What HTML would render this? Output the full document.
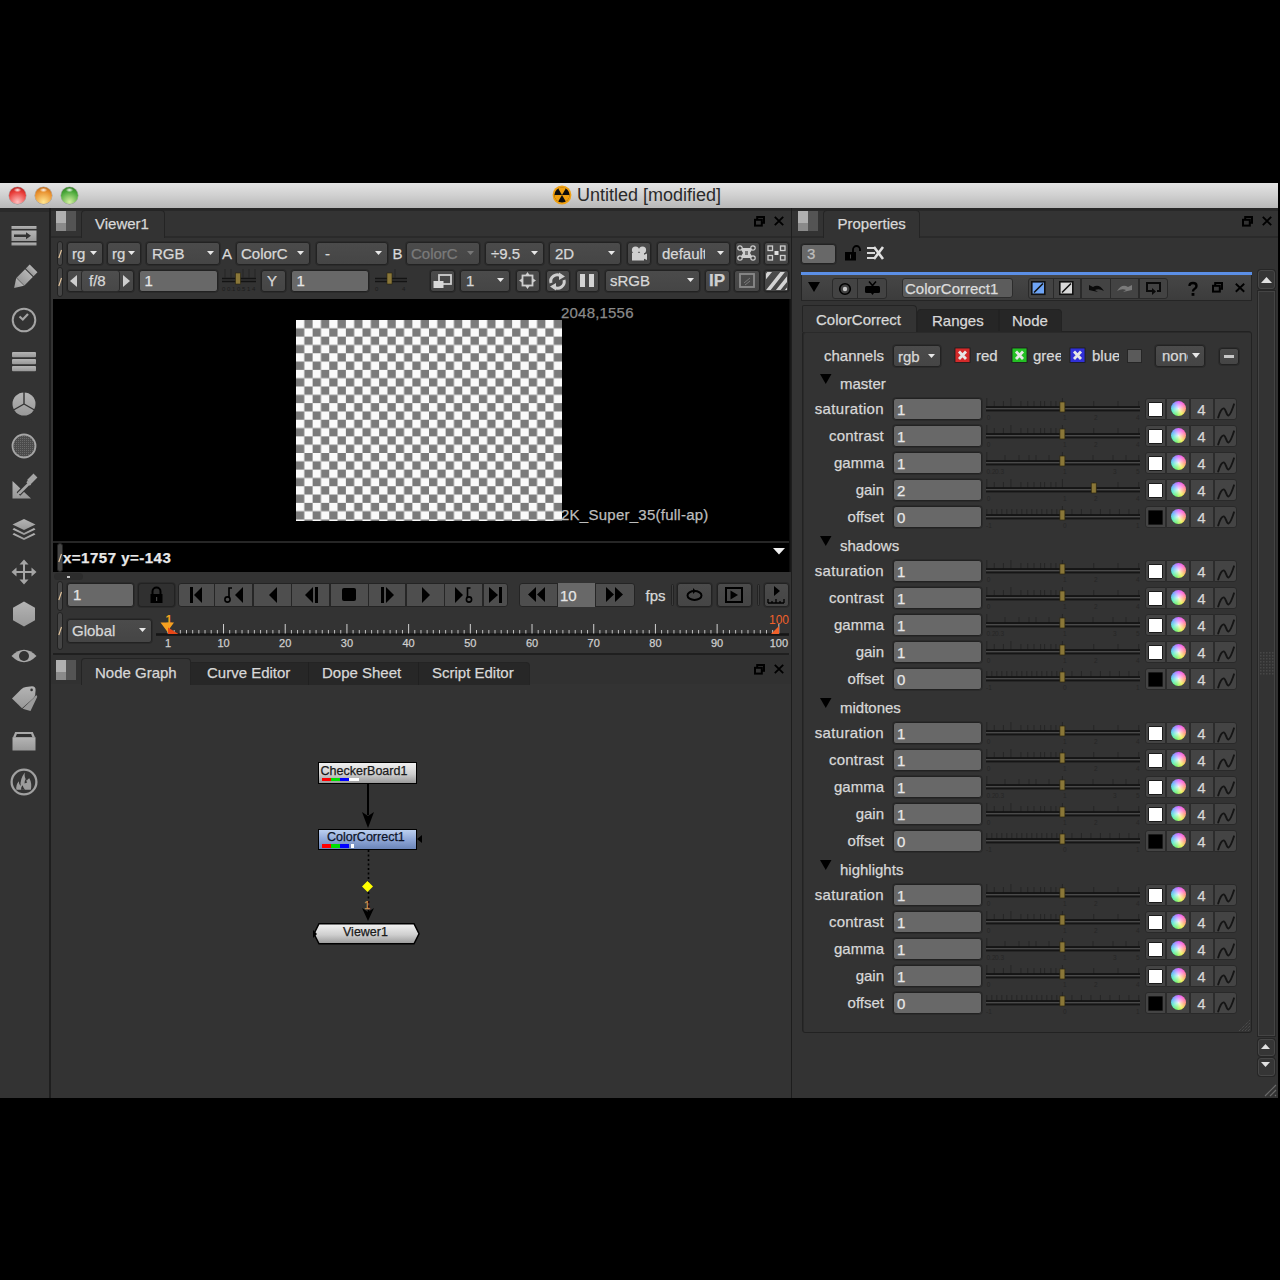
<!DOCTYPE html><html><head><meta charset="utf-8"><style>
html,body{margin:0;padding:0;background:#000;width:1280px;height:1280px;overflow:hidden;font-family:"Liberation Sans", sans-serif;}
div{position:absolute;box-sizing:border-box;}
.t{white-space:nowrap;line-height:1;-webkit-text-stroke:0.25px currentColor;}
.btn{background:linear-gradient(#4b4b4b,#454545);border:1px solid #222;border-radius:3px;box-shadow:0 0 0 0.8px #2a2a2a;}
.fld{background:#686868;border:1px solid #222;border-radius:3px;box-shadow:0 0 0 0.8px #2a2a2a;}
.hdl{background:#3d3d3d;border:1px solid #252525;border-radius:3px;}
svg{position:absolute;overflow:visible;}

</style></head><body>
<div id="root" style="left:0;top:0;width:1280px;height:1280px;background:#000;">
<div style="left:0px;top:183px;width:1280.00px;height:25.00px;background:linear-gradient(#e4e4e4,#d2d2d2 45%,#b8b8b8);"></div>
<div style="left:9.0px;top:186.5px;width:17px;height:17px;border-radius:50%;background:radial-gradient(circle at 50% 88%,#ffc0c0,#e83a36 62%,#9a2020 100%);box-shadow:0 0 0 0.5px rgba(0,0,0,.25);"></div>
<div style="left:14.0px;top:188px;width:7px;height:4px;border-radius:50%;background:radial-gradient(ellipse at 50% 50%,rgba(255,255,255,.95),rgba(255,255,255,0) 80%);"></div>
<div style="left:35.0px;top:186.5px;width:17px;height:17px;border-radius:50%;background:radial-gradient(circle at 50% 88%,#ffe690,#e8902e 62%,#a85a18 100%);box-shadow:0 0 0 0.5px rgba(0,0,0,.25);"></div>
<div style="left:40.0px;top:188px;width:7px;height:4px;border-radius:50%;background:radial-gradient(ellipse at 50% 50%,rgba(255,255,255,.95),rgba(255,255,255,0) 80%);"></div>
<div style="left:61.0px;top:186.5px;width:17px;height:17px;border-radius:50%;background:radial-gradient(circle at 50% 88%,#d4f0a0,#4aa83a 62%,#2c6a20 100%);box-shadow:0 0 0 0.5px rgba(0,0,0,.25);"></div>
<div style="left:66.0px;top:188px;width:7px;height:4px;border-radius:50%;background:radial-gradient(ellipse at 50% 50%,rgba(255,255,255,.95),rgba(255,255,255,0) 80%);"></div>
<svg style="left:552px;top:185px" width="20" height="20" viewBox="0 0 20 20"><circle cx="10" cy="10" r="9.4" fill="#f0a010"/><circle cx="10" cy="10" r="7.6" fill="#0d0d0d"/><path d="M10 10 L6.2 3.4 A7.6 7.6 0 0 1 13.8 3.4 Z" fill="#f0a010"/><path d="M10 10 L17.6 10 A7.6 7.6 0 0 1 13.8 16.6 Z" fill="#f0a010"/><path d="M10 10 L6.2 16.6 A7.6 7.6 0 0 1 2.4 10 Z" fill="#f0a010"/></svg>
<div class="t" style="left:577px;top:186.0px;font-size:18px;color:#2a2a2a;-webkit-text-stroke:0;">Untitled [modified]</div>
<div style="left:0px;top:208px;width:1280.00px;height:890.00px;background:#333;"></div>
<div style="left:0px;top:208px;width:49.00px;height:890.00px;background:#333;"></div>
<div style="left:0px;top:208px;width:49.00px;height:4.00px;background:#2a2a2a;"></div>
<div style="left:49.3px;top:208px;width:1.50px;height:890.00px;background:#1e1e1e;"></div>
<svg style="left:9.5px;top:222.0px" width="28" height="28" viewBox="0 0 28 28"><defs><linearGradient id="ig" x1="0" y1="0" x2="0" y2="1"><stop offset="0" stop-color="#b4b4b4"/><stop offset="1" stop-color="#989898"/></linearGradient></defs><rect x="1.5" y="4" width="25" height="3" fill="url(#ig)"/><rect x="1.5" y="8.5" width="25" height="10.5" fill="url(#ig)"/><rect x="1.5" y="20.5" width="25" height="3" fill="url(#ig)"/><path d="M4 12.6 H16 V10.3 L21 13.75 L16 17.2 V14.9 H4 Z" fill="#333"/></svg>
<svg style="left:9.5px;top:263.5px" width="28" height="28" viewBox="0 0 28 28"><g transform="rotate(45 14 14)"><rect x="8.5" y="0.5" width="11" height="5.5" fill="url(#ig)"/><rect x="8.5" y="7" width="11" height="12" fill="url(#ig)"/><path d="M8.5 19.5 L19.5 19.5 L14 28 Z" fill="url(#ig)"/></g></svg>
<svg style="left:9.5px;top:306.0px" width="28" height="28" viewBox="0 0 28 28"><circle cx="14" cy="14" r="11.3" fill="none" stroke="#a5a5a5" stroke-width="2"/><path d="M9.5 10.5 L12.8 13.5 L18 8" fill="none" stroke="#a5a5a5" stroke-width="2.2"/></svg>
<svg style="left:9.5px;top:348.0px" width="28" height="28" viewBox="0 0 28 28"><rect x="2" y="4" width="24" height="5.2" rx="1" fill="url(#ig)"/><rect x="2" y="11" width="24" height="5.2" rx="1" fill="url(#ig)"/><rect x="2" y="18" width="24" height="5.2" rx="1" fill="url(#ig)"/></svg>
<svg style="left:9.5px;top:390.0px" width="28" height="28" viewBox="0 0 28 28"><circle cx="14" cy="14" r="11.5" fill="url(#ig)"/><path d="M14 14 V2 M14 14 L24.5 20 M14 14 L3.5 20" stroke="#333" stroke-width="1.4"/></svg>
<svg style="left:9.5px;top:432.0px" width="28" height="28" viewBox="0 0 28 28"><defs><pattern id="dp" width="2" height="2" patternUnits="userSpaceOnUse"><rect width="2" height="2" fill="#4c4c4c"/><rect width="1" height="1" fill="#6a6a6a"/></pattern></defs><circle cx="14" cy="14" r="11.5" fill="url(#dp)" stroke="#a5a5a5" stroke-width="1.8"/></svg>
<svg style="left:9.5px;top:474.0px" width="28" height="28" viewBox="0 0 28 28"><path d="M2.5 7 V24.5 H21 Z" fill="url(#ig)"/><path d="M8.5 20 L20 8" stroke="#333" stroke-width="5"/><path d="M9 19.5 L20 8.5" stroke="#a5a5a5" stroke-width="2.6"/><path d="M7.5 21.5 L9.5 18" stroke="#a5a5a5" stroke-width="1.5"/><path d="M17 7.5 L20.5 11 M18.5 6 L23.5 1 L26 3.5 L21 8.5 Z" stroke="#a5a5a5" stroke-width="2" fill="#a5a5a5"/></svg>
<svg style="left:9.5px;top:516.0px" width="28" height="28" viewBox="0 0 28 28"><path d="M14 3 L25.5 8.5 L14 14 L2.5 8.5 Z" fill="url(#ig)"/><path d="M4 12 L14 17 L24 12 L25.5 13.5 L14 19 L2.5 13.5 Z" fill="url(#ig)"/><path d="M4 17 L14 22 L24 17 L25.5 18.5 L14 24 L2.5 18.5 Z" fill="url(#ig)"/></svg>
<svg style="left:9.5px;top:558.0px" width="28" height="28" viewBox="0 0 28 28"><path d="M14 3 V25 M3 14 H25" stroke="#a5a5a5" stroke-width="2"/><path d="M14 1.5 L18.5 6.5 H9.5 Z M14 26.5 L18.5 21.5 H9.5 Z M1.5 14 L6.5 9.5 V18.5 Z M26.5 14 L21.5 9.5 V18.5 Z" fill="#a5a5a5"/></svg>
<svg style="left:9.5px;top:600.0px" width="28" height="28" viewBox="0 0 28 28"><path d="M14 1.5 L25 7.8 V20.2 L14 26.5 L3 20.2 V7.8 Z" fill="url(#ig)"/></svg>
<svg style="left:9.5px;top:642.0px" width="28" height="28" viewBox="0 0 28 28"><path d="M1.5 14 Q14 1.5 26.5 14 Q14 26.5 1.5 14 Z" fill="#a8a8a8"/><circle cx="14" cy="14" r="5" fill="#333"/></svg>
<svg style="left:9.5px;top:684.0px" width="28" height="28" viewBox="0 0 28 28"><path d="M12.5 24.8 L23.5 14.2 Q25 12.5 26.3 11 L27.3 12.8 L20.5 27 Z" fill="#9a9a9a"/><path d="M2 14.5 L11 5.5 Q13 3.6 16 3.1 L22 2.3 Q25.6 2.3 25.6 6 L25.2 10.8 Q24.8 13 23 14.6 L12 24.2 Z" fill="url(#ig)"/><circle cx="21.6" cy="5.9" r="1.3" fill="#333"/></svg>
<svg style="left:9.5px;top:729.0px" width="28" height="24" viewBox="0 0 28 24"><path d="M3 8.2 L5.2 3 H22.8 L25 8.2 Z" fill="#a8a8a8"/><path d="M5.6 8.2 L6.9 5 H21.1 L22.4 8.2 Z" fill="#2e2e2e"/><rect x="2.5" y="8.2" width="23" height="13.3" fill="url(#ig)"/></svg>
<svg style="left:9.5px;top:768.3px" width="28" height="28" viewBox="0 0 28 28"><circle cx="14" cy="14" r="12.4" fill="none" stroke="#a0a0a0" stroke-width="2.3"/><path d="M6.5 21.8 Q5.5 17 8.8 13.2 Q8.8 16.8 10.8 18 Q9.6 11.5 14.8 4.6 Q14 9.8 16.8 12.8 Q17.6 10.8 19.3 10.2 Q22.2 15 20.8 21.8 Z" fill="#9c9c9c"/><path d="M11 21.8 Q10.6 19 12.6 17.2 Q13.2 19.6 15.2 21.8 Z M14.5 15.5 Q14.6 12.5 16 10.5 Q16 13 17.2 14.5 Z" fill="#333"/></svg>
<div style="left:50.8px;top:208px;width:740.00px;height:29.00px;background:#333;"></div>
<div style="left:50.8px;top:208px;width:740.00px;height:3.00px;background:#282828;"></div>
<div style="left:50.8px;top:236px;width:740.00px;height:2.00px;background:#2a2a2a;"></div>
<div style="left:56px;top:211px;width:10.00px;height:12.00px;background:#b0b0b0;"></div><div style="left:56px;top:223px;width:10.00px;height:8.00px;background:#8a8a8a;"></div><div style="left:66px;top:211px;width:10.00px;height:20.00px;background:#545454;"></div>
<div style="left:81px;top:210px;width:84.00px;height:28.00px;background:#333;border:1px solid #242424;border-bottom:none;border-radius:4px 4px 0 0;"></div>
<div class="t" style="left:95px;top:215.6px;font-size:15px;color:#d8d8d8;">Viewer1</div>
<svg style="left:753.5px;top:215.5px" width="11" height="11" viewBox="0 0 11 11"><rect x="3.2" y="1" width="6.8" height="5.8" fill="none" stroke="#000" stroke-width="2"/><rect x="1" y="3.8" width="6.8" height="5.8" fill="#333" stroke="#000" stroke-width="2"/></svg><svg style="left:773.5px;top:215.5px" width="10" height="10" viewBox="0 0 10 10"><path d="M0.8 0.8 L9.2 9.2 M9.2 0.8 L0.8 9.2" stroke="#000" stroke-width="1.9"/></svg>
<div style="left:50.8px;top:238px;width:740.00px;height:61.00px;background:#333;"></div>
<div style="left:56.5px;top:241px;width:6.00px;height:25.00px;background:#454545;border:1px solid #222;border-radius:3px;"></div><svg style="left:57.5px;top:248.5px" width="4" height="10" viewBox="0 0 4 10"><path d="M3.5 1 L0.8 9" stroke="#e8c9a0" stroke-width="1.1"/></svg>
<div style="left:56.5px;top:267px;width:6.00px;height:30.00px;background:#454545;border:1px solid #222;border-radius:3px;"></div><svg style="left:57.5px;top:277.0px" width="4" height="10" viewBox="0 0 4 10"><path d="M3.5 1 L0.8 9" stroke="#e8c9a0" stroke-width="1.1"/></svg>
<div class="btn" style="left:67px;top:242px;width:35.50px;height:22.50px;"></div><div class="t" style="left:72px;top:245.8px;font-size:15px;color:#d8d8d8;">rg</div><svg style="left:89.5px;top:250.75px" width="7" height="4" viewBox="0 0 7 4"><path d="M0 0 L7 0 L3.5 4 Z" fill="#e8e8e8"/></svg>
<div class="btn" style="left:107px;top:242px;width:33.50px;height:22.50px;"></div><div class="t" style="left:112px;top:245.8px;font-size:15px;color:#d8d8d8;">rg</div><svg style="left:127.5px;top:250.75px" width="7" height="4" viewBox="0 0 7 4"><path d="M0 0 L7 0 L3.5 4 Z" fill="#e8e8e8"/></svg>
<div class="btn" style="left:146px;top:242px;width:73.50px;height:22.50px;"></div><div class="t" style="left:152px;top:245.8px;font-size:15px;color:#d8d8d8;">RGB</div><svg style="left:206.5px;top:250.75px" width="7" height="4" viewBox="0 0 7 4"><path d="M0 0 L7 0 L3.5 4 Z" fill="#e8e8e8"/></svg>
<div class="t" style="left:222px;top:245.6px;font-size:15px;color:#d8d8d8;">A</div>
<div class="btn" style="left:236px;top:242px;width:74.00px;height:22.50px;"></div><div class="t" style="left:241px;top:245.8px;font-size:15px;color:#d8d8d8;">ColorC</div><svg style="left:297.0px;top:250.75px" width="7" height="4" viewBox="0 0 7 4"><path d="M0 0 L7 0 L3.5 4 Z" fill="#e8e8e8"/></svg>
<div class="btn" style="left:315.5px;top:242px;width:72.50px;height:22.50px;"></div><div class="t" style="left:325px;top:245.8px;font-size:15px;color:#d8d8d8;">-</div><svg style="left:375.0px;top:250.75px" width="7" height="4" viewBox="0 0 7 4"><path d="M0 0 L7 0 L3.5 4 Z" fill="#e8e8e8"/></svg>
<div class="t" style="left:392.5px;top:245.6px;font-size:15px;color:#d8d8d8;">B</div>
<div class="btn" style="left:405.5px;top:242px;width:74.00px;height:22.50px;"></div><div class="t" style="left:411px;top:245.8px;font-size:15px;color:#7a7a7a;">ColorC</div><svg style="left:466.5px;top:250.75px" width="7" height="4" viewBox="0 0 7 4"><path d="M0 0 L7 0 L3.5 4 Z" fill="#777"/></svg>
<div class="btn" style="left:485px;top:242px;width:58.50px;height:22.50px;"></div><div class="t" style="left:491px;top:245.8px;font-size:15px;color:#d8d8d8;">&#247;9.5</div><svg style="left:530.5px;top:250.75px" width="7" height="4" viewBox="0 0 7 4"><path d="M0 0 L7 0 L3.5 4 Z" fill="#e8e8e8"/></svg>
<div class="btn" style="left:548.5px;top:242px;width:72.50px;height:22.50px;"></div><div class="t" style="left:555px;top:245.8px;font-size:15px;color:#d8d8d8;">2D</div><svg style="left:608.0px;top:250.75px" width="7" height="4" viewBox="0 0 7 4"><path d="M0 0 L7 0 L3.5 4 Z" fill="#e8e8e8"/></svg>
<div class="btn" style="left:627px;top:242px;width:23.50px;height:22.50px;"></div><svg style="left:631px;top:246px" width="16" height="15" viewBox="0 0 16 15"><circle cx="4.5" cy="4" r="3.6" fill="#d0d0d0"/><circle cx="11.5" cy="4" r="3.6" fill="#d0d0d0"/><rect x="1" y="7" width="12" height="7.5" fill="#d0d0d0"/><path d="M12.5 9 L16 7.5 V14 L12.5 12.5 Z" fill="#d0d0d0"/></svg>
<div class="btn" style="left:657px;top:242px;width:73.00px;height:22.50px;"></div><div class="t" style="left:662px;top:245.8px;font-size:15px;color:#d8d8d8;"></div><svg style="left:717.0px;top:250.75px" width="7" height="4" viewBox="0 0 7 4"><path d="M0 0 L7 0 L3.5 4 Z" fill="#e8e8e8"/></svg>
<div style="left:662px;top:242px;width:43px;height:24px;overflow:hidden;"><div class="t" style="left:0px;top:3.6px;font-size:15px;color:#d8d8d8;">default</div></div>
<div class="btn" style="left:734.5px;top:242px;width:25.00px;height:22.50px;"></div><svg style="left:737px;top:245px" width="19" height="16" viewBox="0 0 19 16"><path d="M3 3 L16 3 L13 8 L16 13 L3 13 L6 8 Z" fill="#cfcfcf"/><circle cx="3" cy="3" r="2.2" fill="#444" stroke="#cfcfcf" stroke-width="1.2"/><circle cx="16" cy="3" r="2.2" fill="#444" stroke="#cfcfcf" stroke-width="1.2"/><circle cx="3" cy="13" r="2.2" fill="#444" stroke="#cfcfcf" stroke-width="1.2"/><circle cx="16" cy="13" r="2.2" fill="#444" stroke="#cfcfcf" stroke-width="1.2"/><rect x="8" y="6" width="3" height="4" fill="#777"/></svg>
<div class="btn" style="left:764px;top:242px;width:25.00px;height:22.50px;"></div><svg style="left:767px;top:245px" width="19" height="16" viewBox="0 0 19 16"><g fill="none" stroke="#cfcfcf" stroke-width="1.3"><rect x="1" y="1" width="4.5" height="4.5"/><rect x="13.5" y="1" width="4.5" height="4.5"/><rect x="1" y="10.5" width="4.5" height="4.5"/><rect x="13.5" y="10.5" width="4.5" height="4.5"/></g><rect x="7.5" y="6" width="4" height="4" fill="#e0e0e0"/></svg>
<div class="btn" style="left:67px;top:269.5px;width:66.50px;height:22.00px;"></div>
<div style="left:81px;top:269.5px;width:38.50px;height:22.00px;background:linear-gradient(#4e4e4e,#474747);border:1px solid #2a2a2a;border-radius:3px;"></div>
<svg style="left:70px;top:274.5px" width="7" height="12" viewBox="0 0 7 12"><path d="M7 0 V12 L0 6 Z" fill="#cfcfcf"/></svg>
<svg style="left:123px;top:274.5px" width="7" height="12" viewBox="0 0 7 12"><path d="M0 0 V12 L7 6 Z" fill="#cfcfcf"/></svg>
<div class="t" style="left:89px;top:273.1px;font-size:15px;color:#d8d8d8;">f/8</div>
<div class="fld" style="left:138.5px;top:269.5px;width:79.50px;height:22.00px;"></div><div class="t" style="left:144.5px;top:273.1px;font-size:15px;color:#e6e6e6;">1</div>
<svg style="left:222px;top:265px" width="34" height="24" viewBox="0 0 34 24"><path d="M0 13.5 H34 M0 16.5 H34" stroke="#141414" stroke-width="1.4"/><path d="M3 4 V13 M9 4 V13 M21 4 V13 M27 4 V13 M33 4 V13" stroke="#262626"/><rect x="13.5" y="8" width="5" height="11" fill="#8a7739" stroke="#2b250f" stroke-width="0.6"/><text x="0" y="25.5" font-size="6" fill="#1c1c1c" font-family="Liberation Sans">0 0.1 0.5 1 4</text></svg>
<div class="btn" style="left:260.5px;top:269.5px;width:25.50px;height:22.00px;"></div><div class="t" style="left:267px;top:273.1px;font-size:15px;color:#d8d8d8;">Y</div>
<div class="fld" style="left:290.5px;top:269.5px;width:78.50px;height:22.00px;"></div><div class="t" style="left:296.5px;top:273.1px;font-size:15px;color:#e6e6e6;">1</div>
<svg style="left:375px;top:265px" width="32" height="24" viewBox="0 0 32 24"><path d="M0 13.5 H32 M0 16.5 H32" stroke="#141414" stroke-width="1.4"/><path d="M20 4 V13" stroke="#262626"/><rect x="12" y="8" width="5" height="11" fill="#8a7739" stroke="#2b250f" stroke-width="0.6"/><text x="0" y="25.5" font-size="6" fill="#1c1c1c" font-family="Liberation Sans">0</text><text x="27" y="25.5" font-size="6" fill="#1c1c1c" font-family="Liberation Sans">4</text></svg>
<div class="btn" style="left:430px;top:269.5px;width:25.00px;height:22.00px;"></div><svg style="left:433px;top:273.5px" width="20" height="14" viewBox="0 0 20 14"><rect x="6" y="1" width="12" height="9" fill="none" stroke="#cfcfcf" stroke-width="1.8"/><rect x="0.5" y="7" width="10" height="7" fill="#d8d8d8"/></svg>
<div class="btn" style="left:460px;top:269.5px;width:50.00px;height:22.00px;"></div><div class="t" style="left:466px;top:273.1px;font-size:15px;color:#d8d8d8;">1</div><svg style="left:497.0px;top:278.0px" width="7" height="4" viewBox="0 0 7 4"><path d="M0 0 L7 0 L3.5 4 Z" fill="#e8e8e8"/></svg>
<div class="btn" style="left:515.5px;top:269.5px;width:24.00px;height:22.00px;"></div><svg style="left:519px;top:271.5px" width="17" height="17" viewBox="0 0 17 17"><rect x="3.5" y="3.5" width="10" height="10" fill="none" stroke="#cfcfcf" stroke-width="1.8"/><path d="M8.5 0 L10.5 3 H6.5 Z M8.5 17 L10.5 14 H6.5 Z M0 8.5 L3 6.5 V10.5 Z M17 8.5 L14 6.5 V10.5 Z" fill="#cfcfcf"/></svg>
<div class="btn" style="left:545.5px;top:269.5px;width:24.00px;height:22.00px;"></div><svg style="left:548px;top:271.5px" width="19" height="19" viewBox="0 0 19 19"><path d="M3 11 A6.5 6.5 0 0 1 13 4" fill="none" stroke="#cfcfcf" stroke-width="3"/><path d="M11 0.5 L17 4.5 L11 8 Z" fill="#cfcfcf"/><path d="M16 8 A6.5 6.5 0 0 1 6 15" fill="none" stroke="#cfcfcf" stroke-width="3"/><path d="M8 18.5 L2 14.5 L8 11 Z" fill="#cfcfcf"/></svg>
<div class="btn" style="left:575.5px;top:269.5px;width:23.50px;height:22.00px;"></div><div style="left:580px;top:274.0px;width:4.50px;height:12.50px;background:#d4d4d4;"></div><div style="left:589px;top:274.0px;width:4.50px;height:12.50px;background:#d4d4d4;"></div>
<div class="btn" style="left:605px;top:269.5px;width:95.00px;height:22.00px;"></div><div class="t" style="left:610px;top:273.1px;font-size:15px;color:#d8d8d8;">sRGB</div><svg style="left:687.0px;top:278.0px" width="7" height="4" viewBox="0 0 7 4"><path d="M0 0 L7 0 L3.5 4 Z" fill="#e8e8e8"/></svg>
<div class="btn" style="left:704.5px;top:269.5px;width:25.00px;height:22.00px;"></div><div class="t" style="left:709px;top:272.4px;font-size:17px;color:#d0d0d0;font-weight:bold;">IP</div>
<div class="btn" style="left:734px;top:269.5px;width:25.50px;height:22.00px;"></div><svg style="left:738.5px;top:272.5px" width="16" height="15" viewBox="0 0 16 15"><rect x="1" y="1" width="14" height="13" fill="none" stroke="#8a8a8a" stroke-width="1.8"/><path d="M5 10 L11 5 M6 12 L11 8" stroke="#7a7a7a" stroke-width="1"/></svg>
<div class="btn" style="left:764px;top:269.5px;width:25.00px;height:22.00px;"></div><svg style="left:765px;top:270.5px" width="23" height="20" viewBox="0 0 23 20"><clipPath id="cps"><rect x="1" y="1" width="21" height="18"/></clipPath><g clip-path="url(#cps)" stroke="#d4d4d4" stroke-width="3.6"><path d="M-6 14 L8 -3 M1 22 L20 -2 M10 23 L27 2 M18 24 L30 10"/></g></svg>
<div style="left:53px;top:299px;width:736.00px;height:241.50px;background:#000;"></div>
<div style="left:53px;top:540.5px;width:736.00px;height:2.50px;background:#262626;"></div>
<div style="left:788.5px;top:299px;width:2.50px;height:273.00px;background:linear-gradient(90deg,#080808,#1c1c1c);"></div>
<svg style="left:296px;top:319.5px" width="266" height="201" viewBox="0 0 266 201"><defs><pattern id="ckp" width="16.6250" height="16.6250" patternUnits="userSpaceOnUse"><rect width="16.6250" height="16.6250" fill="#fafafa"/><rect x="8.3125" y="0" width="8.3125" height="8.3125" fill="#7b7b7b"/><rect x="0" y="8.3125" width="8.3125" height="8.3125" fill="#7b7b7b"/></pattern></defs><rect width="266" height="201" fill="url(#ckp)"/></svg>
<div class="t" style="left:561px;top:305.1px;font-size:15px;color:#8a8a8a;letter-spacing:0.2px;">2048,1556</div>
<div class="t" style="left:561px;top:506.6px;font-size:15px;color:#bdbdbd;letter-spacing:0.25px;">2K_Super_35(full-ap)</div>
<div style="left:53px;top:543px;width:736.00px;height:29.00px;background:#000;"></div>
<div style="left:56.5px;top:543px;width:6.00px;height:29.00px;background:#454545;border:1px solid #222;border-radius:3px;"></div><svg style="left:57.5px;top:552.5px" width="4" height="10" viewBox="0 0 4 10"><path d="M3.5 1 L0.8 9" stroke="#e8c9a0" stroke-width="1.1"/></svg>
<div class="t" style="left:63px;top:549.6px;font-size:15px;color:#e8e8e8;font-weight:bold;letter-spacing:0.5px;">x=1757 y=-143</div>
<svg style="left:773.0px;top:548.4000000000001px" width="12" height="6.6" viewBox="0 0 12 6.6"><path d="M0 0 L12 0 L6.0 6.6 Z" fill="#f0f0f0"/></svg>
<div style="left:54px;top:573px;width:29.00px;height:7.00px;background:#2c2c2c;border-radius:4px;"></div>
<div style="left:67px;top:576px;width:3.00px;height:2.00px;background:#c8c8c8;"></div>
<div style="left:56.5px;top:581px;width:6.00px;height:30.00px;background:#454545;border:1px solid #222;border-radius:3px;"></div><svg style="left:57.5px;top:591.0px" width="4" height="10" viewBox="0 0 4 10"><path d="M3.5 1 L0.8 9" stroke="#e8c9a0" stroke-width="1.1"/></svg>
<div class="fld" style="left:67px;top:582.5px;width:67.00px;height:24.50px;"></div><div class="t" style="left:73px;top:587.4px;font-size:15px;color:#e6e6e6;">1</div>
<div style="left:138px;top:582.5px;width:36.50px;height:24.50px;background:#303030;border:1px solid #222;border-radius:3px;box-shadow:0 0 0 0.8px #2a2a2a;"></div>
<svg style="left:149px;top:586.5px" width="15" height="16" viewBox="0 0 15 16"><path d="M3.5 7 V4.5 A4 4 0 0 1 11.5 4.5 V7" fill="none" stroke="#000" stroke-width="2"/><rect x="1.5" y="7" width="12" height="9" fill="#000"/><rect x="7" y="10" width="1.2" height="4" fill="#444"/></svg>
<div style="left:178px;top:582.5px;width:330.00px;height:24.50px;background:#4e4e4e;border:1px solid #242424;border-radius:3px;"></div>
<div style="left:213.7px;top:582.5px;width:1.60px;height:24.50px;background:#262626;"></div>
<div style="left:252.2px;top:582.5px;width:1.60px;height:24.50px;background:#262626;"></div>
<div style="left:290.7px;top:582.5px;width:1.60px;height:24.50px;background:#262626;"></div>
<div style="left:329.2px;top:582.5px;width:1.60px;height:24.50px;background:#262626;"></div>
<div style="left:367.7px;top:582.5px;width:1.60px;height:24.50px;background:#262626;"></div>
<div style="left:405.2px;top:582.5px;width:1.60px;height:24.50px;background:#262626;"></div>
<div style="left:443.7px;top:582.5px;width:1.60px;height:24.50px;background:#262626;"></div>
<div style="left:482.2px;top:582.5px;width:1.60px;height:24.50px;background:#262626;"></div>
<svg style="left:190.25px;top:587.0px" width="12" height="16" viewBox="0 0 12 16"><rect x="0" y="0" width="3" height="16" fill="#000"/><path d="M12 0 V16 L4 8 Z" fill="#000"/></svg>
<svg style="left:224.25px;top:587.0px" width="19" height="16" viewBox="0 0 19 16"><circle cx="3.5" cy="12.5" r="2.6" fill="none" stroke="#000" stroke-width="1.6"/><path d="M5 10 V1 H8" stroke="#000" stroke-width="1.6" fill="none"/><path d="M19 0 V16 L11 8 Z" fill="#000"/></svg>
<svg style="left:267.25px;top:587.0px" width="10" height="16" viewBox="0 0 10 16"><path d="M10 0 V16 L2 8 Z" fill="#000"/></svg>
<svg style="left:303.75px;top:587.0px" width="14" height="16" viewBox="0 0 14 16"><path d="M9 0 V16 L1 8 Z" fill="#000"/><rect x="11" y="0" width="3" height="16" fill="#000"/></svg>
<svg style="left:342.25px;top:587.0px" width="14" height="16" viewBox="0 0 14 16"><rect x="0" y="1" width="14" height="13" rx="2" fill="#000"/></svg>
<svg style="left:380.75px;top:587.0px" width="13" height="16" viewBox="0 0 13 16"><rect x="0" y="0" width="3" height="16" fill="#000"/><path d="M5 0 V16 L13 8 Z" fill="#000"/></svg>
<svg style="left:420.25px;top:587.0px" width="10" height="16" viewBox="0 0 10 16"><path d="M2 0 V16 L10 8 Z" fill="#000"/></svg>
<svg style="left:454.75px;top:587.0px" width="18" height="16" viewBox="0 0 18 16"><path d="M0 0 V16 L8 8 Z" fill="#000"/><circle cx="14" cy="12.5" r="2.6" fill="none" stroke="#000" stroke-width="1.6"/><path d="M12.5 10 V1 H15.5" stroke="#000" stroke-width="1.6" fill="none"/></svg>
<svg style="left:489.0px;top:587.0px" width="13" height="16" viewBox="0 0 13 16"><path d="M0 0 V16 L9 8 Z" fill="#000"/><rect x="10" y="0" width="3" height="16" fill="#000"/></svg>
<div style="left:518.5px;top:582.5px;width:116.50px;height:24.50px;background:#4e4e4e;border:1px solid #242424;border-radius:3px;"></div>
<div style="left:556.5px;top:582.5px;width:39.50px;height:24.50px;background:#686868;border-left:1px solid #262626;border-right:1px solid #262626;"></div>
<svg style="left:527px;top:587.0px" width="19" height="15" viewBox="0 0 19 15"><path d="M9 0 V15 L1 7.5 Z M18 0 V15 L10 7.5 Z" fill="#000"/></svg>
<div class="t" style="left:560px;top:587.6px;font-size:15px;color:#e6e6e6;">10</div>
<svg style="left:606px;top:587.0px" width="19" height="15" viewBox="0 0 19 15"><path d="M0 0 V15 L8 7.5 Z M9 0 V15 L17 7.5 Z" fill="#000"/></svg>
<div class="t" style="left:645.5px;top:587.6px;font-size:15px;color:#d8d8d8;">fps</div>
<div style="left:671px;top:583.5px;width:2.50px;height:22.50px;background:#3d3d3d;border:1px solid #232323;border-radius:2px;"></div>
<div class="btn" style="left:677px;top:582.5px;width:35.00px;height:24.50px;"></div><svg style="left:686px;top:587.5px" width="17" height="13" viewBox="0 0 17 13"><ellipse cx="8.5" cy="7.5" rx="7" ry="4.5" fill="none" stroke="#000" stroke-width="2"/><path d="M7 0 L10 3 L7 6 Z" fill="#000"/></svg>
<div class="btn" style="left:716.5px;top:582.5px;width:35.50px;height:24.50px;"></div><svg style="left:725px;top:586.5px" width="18" height="16" viewBox="0 0 18 16"><rect x="1" y="1" width="16" height="14" fill="none" stroke="#000" stroke-width="2"/><path d="M5.5 3.5 V12.5 L13 8 Z" fill="#000"/></svg>
<div style="left:757px;top:583.5px;width:2.50px;height:22.50px;background:#3d3d3d;border:1px solid #232323;border-radius:2px;"></div>
<div class="btn" style="left:763.5px;top:582.5px;width:25.50px;height:24.50px;"></div><svg style="left:766px;top:585.5px" width="20" height="18" viewBox="0 0 20 18"><path d="M8 0 V10 L14 5 Z" fill="#000"/><path d="M2 17 H18 M2 17 V13 M6 17 V15 M10 17 V13 M14 17 V15 M18 17 V13" stroke="#000" stroke-width="1.3"/></svg>
<div style="left:56.5px;top:612px;width:6.00px;height:38.00px;background:#454545;border:1px solid #222;border-radius:3px;"></div><svg style="left:57.5px;top:626.0px" width="4" height="10" viewBox="0 0 4 10"><path d="M3.5 1 L0.8 9" stroke="#e8c9a0" stroke-width="1.1"/></svg>
<div class="btn" style="left:67px;top:618.5px;width:85.00px;height:24.00px;"></div><div class="t" style="left:72px;top:623.1px;font-size:15px;color:#d8d8d8;">Global</div><svg style="left:139.0px;top:628.0px" width="7" height="4" viewBox="0 0 7 4"><path d="M0 0 L7 0 L3.5 4 Z" fill="#e8e8e8"/></svg>
<svg style="left:156px;top:630px" width="629" height="10" viewBox="0 0 629 10"><path d="M0 4.5 H633" stroke="#151515" stroke-width="2.5"/><path d="M12.00 -6 V3.5" stroke="#d0d0d0" stroke-width="1"/><path d="M18.17 0 V3.5" stroke="#c0c0c0" stroke-width="1"/><path d="M24.34 0 V3.5" stroke="#c0c0c0" stroke-width="1"/><path d="M30.51 0 V3.5" stroke="#c0c0c0" stroke-width="1"/><path d="M36.68 0 V3.5" stroke="#c0c0c0" stroke-width="1"/><path d="M42.85 0 V3.5" stroke="#c0c0c0" stroke-width="1"/><path d="M49.02 0 V3.5" stroke="#c0c0c0" stroke-width="1"/><path d="M55.19 0 V3.5" stroke="#c0c0c0" stroke-width="1"/><path d="M61.36 0 V3.5" stroke="#c0c0c0" stroke-width="1"/><path d="M67.53 -6 V3.5" stroke="#d0d0d0" stroke-width="1"/><path d="M73.70 0 V3.5" stroke="#c0c0c0" stroke-width="1"/><path d="M79.87 0 V3.5" stroke="#c0c0c0" stroke-width="1"/><path d="M86.04 0 V3.5" stroke="#c0c0c0" stroke-width="1"/><path d="M92.21 0 V3.5" stroke="#c0c0c0" stroke-width="1"/><path d="M98.38 0 V3.5" stroke="#c0c0c0" stroke-width="1"/><path d="M104.55 0 V3.5" stroke="#c0c0c0" stroke-width="1"/><path d="M110.72 0 V3.5" stroke="#c0c0c0" stroke-width="1"/><path d="M116.89 0 V3.5" stroke="#c0c0c0" stroke-width="1"/><path d="M123.06 0 V3.5" stroke="#c0c0c0" stroke-width="1"/><path d="M129.23 -6 V3.5" stroke="#d0d0d0" stroke-width="1"/><path d="M135.40 0 V3.5" stroke="#c0c0c0" stroke-width="1"/><path d="M141.57 0 V3.5" stroke="#c0c0c0" stroke-width="1"/><path d="M147.74 0 V3.5" stroke="#c0c0c0" stroke-width="1"/><path d="M153.91 0 V3.5" stroke="#c0c0c0" stroke-width="1"/><path d="M160.08 0 V3.5" stroke="#c0c0c0" stroke-width="1"/><path d="M166.25 0 V3.5" stroke="#c0c0c0" stroke-width="1"/><path d="M172.42 0 V3.5" stroke="#c0c0c0" stroke-width="1"/><path d="M178.59 0 V3.5" stroke="#c0c0c0" stroke-width="1"/><path d="M184.76 0 V3.5" stroke="#c0c0c0" stroke-width="1"/><path d="M190.93 -6 V3.5" stroke="#d0d0d0" stroke-width="1"/><path d="M197.10 0 V3.5" stroke="#c0c0c0" stroke-width="1"/><path d="M203.27 0 V3.5" stroke="#c0c0c0" stroke-width="1"/><path d="M209.44 0 V3.5" stroke="#c0c0c0" stroke-width="1"/><path d="M215.61 0 V3.5" stroke="#c0c0c0" stroke-width="1"/><path d="M221.78 0 V3.5" stroke="#c0c0c0" stroke-width="1"/><path d="M227.95 0 V3.5" stroke="#c0c0c0" stroke-width="1"/><path d="M234.12 0 V3.5" stroke="#c0c0c0" stroke-width="1"/><path d="M240.29 0 V3.5" stroke="#c0c0c0" stroke-width="1"/><path d="M246.46 0 V3.5" stroke="#c0c0c0" stroke-width="1"/><path d="M252.63 -6 V3.5" stroke="#d0d0d0" stroke-width="1"/><path d="M258.80 0 V3.5" stroke="#c0c0c0" stroke-width="1"/><path d="M264.97 0 V3.5" stroke="#c0c0c0" stroke-width="1"/><path d="M271.14 0 V3.5" stroke="#c0c0c0" stroke-width="1"/><path d="M277.31 0 V3.5" stroke="#c0c0c0" stroke-width="1"/><path d="M283.48 0 V3.5" stroke="#c0c0c0" stroke-width="1"/><path d="M289.65 0 V3.5" stroke="#c0c0c0" stroke-width="1"/><path d="M295.82 0 V3.5" stroke="#c0c0c0" stroke-width="1"/><path d="M301.99 0 V3.5" stroke="#c0c0c0" stroke-width="1"/><path d="M308.16 0 V3.5" stroke="#c0c0c0" stroke-width="1"/><path d="M314.33 -6 V3.5" stroke="#d0d0d0" stroke-width="1"/><path d="M320.50 0 V3.5" stroke="#c0c0c0" stroke-width="1"/><path d="M326.67 0 V3.5" stroke="#c0c0c0" stroke-width="1"/><path d="M332.84 0 V3.5" stroke="#c0c0c0" stroke-width="1"/><path d="M339.01 0 V3.5" stroke="#c0c0c0" stroke-width="1"/><path d="M345.18 0 V3.5" stroke="#c0c0c0" stroke-width="1"/><path d="M351.35 0 V3.5" stroke="#c0c0c0" stroke-width="1"/><path d="M357.52 0 V3.5" stroke="#c0c0c0" stroke-width="1"/><path d="M363.69 0 V3.5" stroke="#c0c0c0" stroke-width="1"/><path d="M369.86 0 V3.5" stroke="#c0c0c0" stroke-width="1"/><path d="M376.03 -6 V3.5" stroke="#d0d0d0" stroke-width="1"/><path d="M382.20 0 V3.5" stroke="#c0c0c0" stroke-width="1"/><path d="M388.37 0 V3.5" stroke="#c0c0c0" stroke-width="1"/><path d="M394.54 0 V3.5" stroke="#c0c0c0" stroke-width="1"/><path d="M400.71 0 V3.5" stroke="#c0c0c0" stroke-width="1"/><path d="M406.88 0 V3.5" stroke="#c0c0c0" stroke-width="1"/><path d="M413.05 0 V3.5" stroke="#c0c0c0" stroke-width="1"/><path d="M419.22 0 V3.5" stroke="#c0c0c0" stroke-width="1"/><path d="M425.39 0 V3.5" stroke="#c0c0c0" stroke-width="1"/><path d="M431.56 0 V3.5" stroke="#c0c0c0" stroke-width="1"/><path d="M437.73 -6 V3.5" stroke="#d0d0d0" stroke-width="1"/><path d="M443.90 0 V3.5" stroke="#c0c0c0" stroke-width="1"/><path d="M450.07 0 V3.5" stroke="#c0c0c0" stroke-width="1"/><path d="M456.24 0 V3.5" stroke="#c0c0c0" stroke-width="1"/><path d="M462.41 0 V3.5" stroke="#c0c0c0" stroke-width="1"/><path d="M468.58 0 V3.5" stroke="#c0c0c0" stroke-width="1"/><path d="M474.75 0 V3.5" stroke="#c0c0c0" stroke-width="1"/><path d="M480.92 0 V3.5" stroke="#c0c0c0" stroke-width="1"/><path d="M487.09 0 V3.5" stroke="#c0c0c0" stroke-width="1"/><path d="M493.26 0 V3.5" stroke="#c0c0c0" stroke-width="1"/><path d="M499.43 -6 V3.5" stroke="#d0d0d0" stroke-width="1"/><path d="M505.60 0 V3.5" stroke="#c0c0c0" stroke-width="1"/><path d="M511.77 0 V3.5" stroke="#c0c0c0" stroke-width="1"/><path d="M517.94 0 V3.5" stroke="#c0c0c0" stroke-width="1"/><path d="M524.11 0 V3.5" stroke="#c0c0c0" stroke-width="1"/><path d="M530.28 0 V3.5" stroke="#c0c0c0" stroke-width="1"/><path d="M536.45 0 V3.5" stroke="#c0c0c0" stroke-width="1"/><path d="M542.62 0 V3.5" stroke="#c0c0c0" stroke-width="1"/><path d="M548.79 0 V3.5" stroke="#c0c0c0" stroke-width="1"/><path d="M554.96 0 V3.5" stroke="#c0c0c0" stroke-width="1"/><path d="M561.13 -6 V3.5" stroke="#d0d0d0" stroke-width="1"/><path d="M567.30 0 V3.5" stroke="#c0c0c0" stroke-width="1"/><path d="M573.47 0 V3.5" stroke="#c0c0c0" stroke-width="1"/><path d="M579.64 0 V3.5" stroke="#c0c0c0" stroke-width="1"/><path d="M585.81 0 V3.5" stroke="#c0c0c0" stroke-width="1"/><path d="M591.98 0 V3.5" stroke="#c0c0c0" stroke-width="1"/><path d="M598.15 0 V3.5" stroke="#c0c0c0" stroke-width="1"/><path d="M604.32 0 V3.5" stroke="#c0c0c0" stroke-width="1"/><path d="M610.49 0 V3.5" stroke="#c0c0c0" stroke-width="1"/><path d="M616.66 0 V3.5" stroke="#c0c0c0" stroke-width="1"/><path d="M622.83 -6 V3.5" stroke="#d0d0d0" stroke-width="1"/></svg>
<div class="t" style="left:-32.0px;width:400px;text-align:center;top:638.0px;font-size:11px;color:#cfcfcf;">1</div>
<div class="t" style="left:23.53px;width:400px;text-align:center;top:638.0px;font-size:11px;color:#cfcfcf;">10</div>
<div class="t" style="left:85.23000000000002px;width:400px;text-align:center;top:638.0px;font-size:11px;color:#cfcfcf;">20</div>
<div class="t" style="left:146.93px;width:400px;text-align:center;top:638.0px;font-size:11px;color:#cfcfcf;">30</div>
<div class="t" style="left:208.63px;width:400px;text-align:center;top:638.0px;font-size:11px;color:#cfcfcf;">40</div>
<div class="t" style="left:270.33px;width:400px;text-align:center;top:638.0px;font-size:11px;color:#cfcfcf;">50</div>
<div class="t" style="left:332.03px;width:400px;text-align:center;top:638.0px;font-size:11px;color:#cfcfcf;">60</div>
<div class="t" style="left:393.73px;width:400px;text-align:center;top:638.0px;font-size:11px;color:#cfcfcf;">70</div>
<div class="t" style="left:455.43000000000006px;width:400px;text-align:center;top:638.0px;font-size:11px;color:#cfcfcf;">80</div>
<div class="t" style="left:517.13px;width:400px;text-align:center;top:638.0px;font-size:11px;color:#cfcfcf;">90</div>
<div class="t" style="left:578.83px;width:400px;text-align:center;top:638.0px;font-size:11px;color:#cfcfcf;">100</div>
<svg style="left:160px;top:612px" width="20" height="24" viewBox="0 0 20 24"><text x="5.5" y="11.5" font-size="12" font-weight="bold" fill="#f0a020" font-family="Liberation Sans">1</text><path d="M0.5 10.5 H14 L10 16 L9 22 Z" fill="#f5a020"/><path d="M8 15.5 L18.5 22 H8 Z" fill="#e84818"/></svg>
<svg style="left:770px;top:614px" width="20" height="22" viewBox="0 0 20 22"><text x="-1" y="9.5" font-size="12" fill="#f0602a" font-family="Liberation Sans">100</text><path d="M9 12 V20 H1 Z" fill="#f0602a"/></svg>
<div style="left:53px;top:652.8px;width:736.00px;height:1.80px;background:#1f1f1f;"></div>
<div style="left:50.8px;top:654.6px;width:740.00px;height:29.90px;background:#313131;"></div>
<div style="left:56px;top:660px;width:10.00px;height:12.00px;background:#b0b0b0;"></div><div style="left:56px;top:672px;width:10.00px;height:8.00px;background:#8a8a8a;"></div><div style="left:66px;top:660px;width:10.00px;height:20.00px;background:#545454;"></div>
<div style="left:81px;top:658px;width:110.00px;height:27.00px;background:#333;border:1px solid #242424;border-bottom:none;border-radius:4px 4px 0 0;"></div>
<div class="t" style="left:95px;top:665.1px;font-size:15px;color:#d8d8d8;">Node Graph</div>
<div style="left:191px;top:662px;width:339.00px;height:22.50px;background:#272727;border-top:1px solid #242424;border-right:1px solid #242424;border-radius:0 4px 0 0;"></div>
<div style="left:307.5px;top:662px;width:1.50px;height:22.50px;background:#202020;"></div>
<div style="left:417.5px;top:662px;width:1.50px;height:22.50px;background:#202020;"></div>
<div class="t" style="left:207px;top:665.1px;font-size:15px;color:#d8d8d8;">Curve Editor</div>
<div class="t" style="left:322px;top:665.1px;font-size:15px;color:#d8d8d8;">Dope Sheet</div>
<div class="t" style="left:432px;top:665.1px;font-size:15px;color:#d8d8d8;">Script Editor</div>
<svg style="left:753.5px;top:663.5px" width="11" height="11" viewBox="0 0 11 11"><rect x="3.2" y="1" width="6.8" height="5.8" fill="none" stroke="#000" stroke-width="2"/><rect x="1" y="3.8" width="6.8" height="5.8" fill="#333" stroke="#000" stroke-width="2"/></svg><svg style="left:773.5px;top:663.5px" width="10" height="10" viewBox="0 0 10 10"><path d="M0.8 0.8 L9.2 9.2 M9.2 0.8 L0.8 9.2" stroke="#000" stroke-width="1.9"/></svg>
<div style="left:50.8px;top:684.5px;width:740.00px;height:413.50px;background:#333;"></div>
<div style="left:317.5px;top:761.5px;width:99.50px;height:22.00px;background:linear-gradient(#f0f0f0,#cfcfcf 55%,#9a9a9a);border:1.5px solid #000;"></div>
<div class="t" style="left:320.5px;top:764.8px;font-size:12.5px;color:#1a1a1a;">CheckerBoard1</div>
<div style="left:321.5px;top:777.5px;width:9.00px;height:3.50px;background:#ff0000;"></div><div style="left:330.5px;top:777.5px;width:9.00px;height:3.50px;background:#00e000;"></div><div style="left:339.5px;top:777.5px;width:9.00px;height:3.50px;background:#0000ff;"></div><div style="left:348.5px;top:777.5px;width:10.50px;height:3.50px;background:#fff;"></div>
<div style="left:366.8px;top:783.5px;width:2.00px;height:31.50px;background:#000;"></div>
<svg style="left:362px;top:812px" width="12" height="16" viewBox="0 0 12 16"><path d="M0 0 L6 4 L12 0 L6 16 Z" fill="#000"/></svg>
<div style="left:317.5px;top:828.5px;width:99.50px;height:21.50px;background:linear-gradient(#bcd0f0,#90a8d8 50%,#6b85b8);border:1.5px solid #000;"></div>
<div class="t" style="left:327px;top:831.2px;font-size:12.5px;color:#0d1428;">ColorCorrect1</div>
<div style="left:321.5px;top:844px;width:9.00px;height:3.50px;background:#ff0000;"></div><div style="left:330.5px;top:844px;width:9.00px;height:3.50px;background:#00e000;"></div><div style="left:339.5px;top:844px;width:9.00px;height:3.50px;background:#0000ff;"></div><div style="left:350.5px;top:844px;width:3.00px;height:3.50px;background:#fff;"></div>
<svg style="left:417px;top:835px" width="5" height="8" viewBox="0 0 5 8"><path d="M5 0 V8 L0 4 Z" fill="#000"/></svg>
<svg style="left:366.5px;top:850px" width="3" height="70" viewBox="0 0 3 70"><path d="M1.5 0 V32 M1.5 42 V62" stroke="#000" stroke-width="1.6" stroke-dasharray="2 2.5"/></svg>
<svg style="left:362px;top:881px" width="11" height="11" viewBox="0 0 11 11"><path d="M5.5 0 L11 5.5 L5.5 11 L0 5.5 Z" fill="#ffff00"/></svg>
<div class="t" style="left:167px;width:400px;text-align:center;top:900.0px;font-size:11px;color:#d09050;">1</div>
<svg style="left:362px;top:908px" width="12" height="13" viewBox="0 0 12 13"><path d="M0 0 L6 4 L12 0 L6 13 Z" fill="#000"/></svg>
<svg style="left:313px;top:923px" width="108" height="22" viewBox="0 0 108 22"><path d="M6 0.75 H101 L106 10.75 L101 20.75 H6 L1 10.75 Z" fill="url(#vg)" stroke="#000" stroke-width="1.5"/><defs><linearGradient id="vg" x1="0" y1="0" x2="0" y2="1"><stop offset="0" stop-color="#f4f4f4"/><stop offset="0.55" stop-color="#cfcfcf"/><stop offset="1" stop-color="#999"/></linearGradient></defs></svg>
<svg style="left:313px;top:929.5px" width="4" height="8" viewBox="0 0 4 8"><path d="M0 0 V8 L4 4 Z" fill="#000"/></svg>
<div class="t" style="left:343px;top:926.2px;font-size:12.5px;color:#1a1a1a;">Viewer1</div>
<div style="left:790.8px;top:208px;width:1.20px;height:890.00px;background:#1d1d1d;"></div>
<div style="left:792px;top:208px;width:486.00px;height:29.00px;background:#333;"></div>
<div style="left:792px;top:208px;width:486.00px;height:3.00px;background:#282828;"></div>
<div style="left:792px;top:236px;width:486.00px;height:2.00px;background:#2a2a2a;"></div>
<div style="left:797.5px;top:211px;width:10.00px;height:12.00px;background:#b0b0b0;"></div><div style="left:797.5px;top:223px;width:10.00px;height:8.00px;background:#8a8a8a;"></div><div style="left:807.5px;top:211px;width:10.00px;height:20.00px;background:#545454;"></div>
<div style="left:823px;top:210px;width:96.50px;height:28.00px;background:#333;border:1px solid #242424;border-bottom:none;border-radius:4px 4px 0 0;"></div>
<div class="t" style="left:837.5px;top:215.6px;font-size:15px;color:#d8d8d8;">Properties</div>
<svg style="left:1242px;top:215.5px" width="11" height="11" viewBox="0 0 11 11"><rect x="3.2" y="1" width="6.8" height="5.8" fill="none" stroke="#000" stroke-width="2"/><rect x="1" y="3.8" width="6.8" height="5.8" fill="#333" stroke="#000" stroke-width="2"/></svg><svg style="left:1262px;top:215.5px" width="10" height="10" viewBox="0 0 10 10"><path d="M0.8 0.8 L9.2 9.2 M9.2 0.8 L0.8 9.2" stroke="#000" stroke-width="1.9"/></svg>
<div style="left:792px;top:238px;width:486.00px;height:860.00px;background:#333;"></div>
<div style="left:1278px;top:183px;width:2.00px;height:915.00px;background:#000;"></div>
<div class="fld" style="left:801px;top:243.5px;width:35.00px;height:20.00px;"></div><div class="t" style="left:807px;top:246.1px;font-size:15px;color:#bdbdbd;">3</div>
<svg style="left:843.5px;top:245px" width="17" height="16" viewBox="0 0 17 16"><path d="M9 7 V4.5 A3.5 3.5 0 0 1 16 4.5 V6" fill="none" stroke="#000" stroke-width="1.8"/><rect x="1" y="7" width="11" height="8.5" fill="#000"/><rect x="6" y="9.5" width="1" height="4" fill="#444"/></svg>
<svg style="left:866px;top:246px" width="19" height="14" viewBox="0 0 19 14"><path d="M1 2 H9 M1 7 H9 M1 12 H9" stroke="#d8d8d8" stroke-width="2"/><path d="M8 1 L17 13 M17 1 L8 13" stroke="#e0e0e0" stroke-width="2.6"/></svg>
<div style="left:801px;top:271.5px;width:451.00px;height:3.50px;background:#5b8fe6;"></div>
<div style="left:801px;top:275px;width:451.00px;height:26.00px;background:linear-gradient(#464646,#3c3c3c);border:1px solid #252525;border-top:none;"></div>
<svg style="left:808px;top:282px" width="12" height="10" viewBox="0 0 12 10"><path d="M0 0 H12 L6 10 Z" fill="#000"/></svg>
<div style="left:832px;top:277.5px;width:55.00px;height:21.00px;background:#434343;border:1px solid #2a2a2a;border-radius:3px;"></div>
<div style="left:856.5px;top:277.5px;width:1.50px;height:21.00px;background:#2a2a2a;"></div>
<svg style="left:838px;top:281.5px" width="14" height="14" viewBox="0 0 14 14"><circle cx="7" cy="7" r="5.3" fill="none" stroke="#000" stroke-width="1.6"/><circle cx="7" cy="7" r="2.2" fill="#c8c8c8"/></svg>
<svg style="left:864px;top:281px" width="17" height="15" viewBox="0 0 17 15"><path d="M5 0.5 L8.5 4.5 L12 0.5" stroke="#000" stroke-width="1.5" fill="none"/><rect x="1" y="5" width="15" height="7" rx="1.5" fill="#000"/><path d="M7 12 H10 L8.5 14 Z" fill="#000"/></svg>
<div style="left:901.5px;top:278px;width:111.50px;height:20.00px;background:#5c5c5c;border:1px solid #2c2c2c;border-radius:3px;"></div>
<div class="t" style="left:905px;top:280.6px;font-size:15px;color:#dcdcdc;">ColorCorrect1</div>
<div style="left:1027.5px;top:277.5px;width:140.00px;height:21.00px;background:#434343;border:1px solid #2a2a2a;border-radius:3px;"></div>
<div style="left:1052.8px;top:277.5px;width:1.40px;height:21.00px;background:#2a2a2a;"></div>
<div style="left:1080.3px;top:277.5px;width:1.40px;height:21.00px;background:#2a2a2a;"></div>
<div style="left:1109.8px;top:277.5px;width:1.40px;height:21.00px;background:#2a2a2a;"></div>
<div style="left:1138.3px;top:277.5px;width:1.40px;height:21.00px;background:#2a2a2a;"></div>
<svg style="left:1031px;top:280.5px" width="15" height="14" viewBox="0 0 15 14"><rect x="0.8" y="0.8" width="13" height="12.5" fill="#6ea4f5" stroke="#111" stroke-width="1.6"/><path d="M3 11.5 L12 2.5" stroke="#111" stroke-width="1.6"/></svg>
<svg style="left:1059px;top:280.5px" width="15" height="14" viewBox="0 0 15 14"><rect x="0.8" y="0.8" width="13" height="12.5" fill="#d8d8d8" stroke="#111" stroke-width="1.6"/><path d="M3 11.5 L12 2.5" stroke="#111" stroke-width="1.6"/></svg>
<svg style="left:1087px;top:282px" width="18" height="12" viewBox="0 0 18 12"><path d="M2 8 V3 L6 5 Q12 1 17 9 Q12 6 8 8 L11 10 Z" fill="#0a0a0a"/></svg>
<svg style="left:1116px;top:282px" width="18" height="12" viewBox="0 0 18 12"><path d="M16 8 V3 L12 5 Q6 1 1 9 Q6 6 10 8 L7 10 Z" fill="#7a7a7a"/></svg>
<svg style="left:1145px;top:281px" width="17" height="15" viewBox="0 0 17 15"><path d="M8 10 H2 V2 H15 V10 H12" fill="none" stroke="#0a0a0a" stroke-width="2"/><path d="M7 7 V14 L11 10.5 Z" fill="#0a0a0a"/></svg>
<svg style="left:1187.5px;top:282px" width="10" height="14" viewBox="0 0 10 14"><path d="M1.5 4 Q1.5 1 5 1 Q8.5 1 8.5 4 Q8.5 6 6.5 7 Q5 7.8 5 9.5" fill="none" stroke="#000" stroke-width="2.4"/><rect x="3.6" y="11" width="2.8" height="2.8" fill="#000"/></svg>
<svg style="left:1211.5px;top:282px" width="11" height="11" viewBox="0 0 11 11"><rect x="3.2" y="1" width="6.8" height="5.8" fill="none" stroke="#000" stroke-width="2"/><rect x="1" y="3.8" width="6.8" height="5.8" fill="#3a3a3a" stroke="#000" stroke-width="2"/></svg><svg style="left:1234.5px;top:283px" width="10" height="9.5" viewBox="0 0 10 9.5"><path d="M0.8 0.8 L9.2 8.7 M9.2 0.8 L0.8 8.7" stroke="#000" stroke-width="1.9"/></svg>
<div style="left:1257.5px;top:270px;width:17.50px;height:19.00px;background:#353535;border:1px solid #474747;border-radius:3px;box-shadow:0 0 0 1px #262626;"></div>
<svg style="left:1260.75px;top:277.0px" width="11" height="6" viewBox="0 0 11 6"><path d="M0 6 L11 6 L5.5 0 Z" fill="#e0e0e0"/></svg>
<div style="left:1257.5px;top:291px;width:17.00px;height:744.50px;background:#333;border:1px solid #444;box-shadow:0 0 0 1px #262626;"></div>
<div style="left:1257.5px;top:1038.5px;width:17.50px;height:17.00px;background:#353535;border:1px solid #474747;border-radius:3px;box-shadow:0 0 0 1px #262626;"></div>
<svg style="left:1261.0px;top:1044.0px" width="9" height="5" viewBox="0 0 9 5"><path d="M0 5 L9 5 L4.5 0 Z" fill="#e0e0e0"/></svg>
<div style="left:1257.5px;top:1058px;width:17.50px;height:17.50px;background:#353535;border:1px solid #474747;border-radius:3px;box-shadow:0 0 0 1px #262626;"></div>
<svg style="left:1261.0px;top:1062.0px" width="9" height="5" viewBox="0 0 9 5"><path d="M0 0 L9 0 L4.5 5 Z" fill="#e0e0e0"/></svg>
<svg style="left:1264px;top:1084px" width="13" height="13" viewBox="0 0 13 13"><path d="M1 12 L12 1 M6 12 L12 6 M11 12 L12 11" stroke="#6a6a6a" stroke-width="1.2"/></svg>
<svg style="left:1260px;top:652px" width="14" height="24" viewBox="0 0 14 24"><defs><pattern id="grp" width="3" height="3" patternUnits="userSpaceOnUse"><rect width="1.5" height="1.5" fill="#474747"/></pattern></defs><rect width="14" height="24" fill="url(#grp)"/></svg>
<div style="left:801.5px;top:331px;width:450.00px;height:702.00px;background:#333;border:1px solid #222;border-radius:3px;box-shadow:inset 1px 1px 0 #2a2a2a;"></div>
<div style="left:916.5px;top:308.5px;width:145.50px;height:23.00px;background:#262626;border:1px solid #232323;border-bottom:none;border-radius:4px 4px 0 0;"></div>
<div style="left:998px;top:308.5px;width:1.50px;height:22.50px;background:#222;"></div>
<div style="left:801.5px;top:305px;width:115.50px;height:27.00px;background:#333;border:1px solid #232323;border-bottom:none;border-radius:2px 4px 0 0;"></div>
<div class="t" style="left:816px;top:312.1px;font-size:15px;color:#d8d8d8;">ColorCorrect</div>
<div class="t" style="left:932px;top:312.6px;font-size:15px;color:#d8d8d8;">Ranges</div>
<div class="t" style="left:1012px;top:312.6px;font-size:15px;color:#d8d8d8;">Node</div>
<svg style="left:1238px;top:1019px" width="13" height="13" viewBox="0 0 13 13"><path d="M1 12 L12 1 M4 12 L12 4 M7 12 L12 7 M10 12 L12 10" stroke="#555" stroke-width="1" stroke-dasharray="1 1"/></svg>
<div class="t" style="left:484px;width:400px;text-align:right;top:348.4px;font-size:15px;color:#d8d8d8;">channels</div>
<div class="btn" style="left:893px;top:345px;width:47.50px;height:22.00px;"></div><div class="t" style="left:898px;top:348.6px;font-size:15px;color:#d8d8d8;">rgb</div><svg style="left:927.5px;top:353.5px" width="7" height="4" viewBox="0 0 7 4"><path d="M0 0 L7 0 L3.5 4 Z" fill="#e8e8e8"/></svg>
<svg style="left:955px;top:348px" width="15" height="15" viewBox="0 0 15 15"><rect x="0" y="0" width="15" height="14.5" fill="#d42a2a" stroke="#1a1a1a" stroke-width="0.8"/><path d="M4 3.5 L11 11 M11 3.5 L4 11" stroke="#e6e6e6" stroke-width="2.8"/></svg>
<div class="t" style="left:976px;top:348.4px;font-size:15px;color:#d8d8d8;">red</div>
<svg style="left:1012px;top:348px" width="15" height="15" viewBox="0 0 15 15"><rect x="0" y="0" width="15" height="14.5" fill="#24c024" stroke="#1a1a1a" stroke-width="0.8"/><path d="M4 3.5 L11 11 M11 3.5 L4 11" stroke="#e6e6e6" stroke-width="2.8"/></svg>
<div style="left:1033px;top:340px;width:28px;height:28px;overflow:hidden;"><div class="t" style="left:0px;top:8.4px;font-size:15px;color:#d8d8d8;">green</div></div>
<svg style="left:1070px;top:348px" width="15" height="15" viewBox="0 0 15 15"><rect x="0" y="0" width="15" height="14.5" fill="#3030d8" stroke="#1a1a1a" stroke-width="0.8"/><path d="M4 3.5 L11 11 M11 3.5 L4 11" stroke="#e6e6e6" stroke-width="2.8"/></svg>
<div style="left:1092px;top:340px;width:27px;height:28px;overflow:hidden;"><div class="t" style="left:0px;top:8.4px;font-size:15px;color:#d8d8d8;">blue</div></div>
<div style="left:1127px;top:348.5px;width:14.50px;height:14.00px;background:#5a5a5a;border:1px solid #262626;"></div>
<div style="left:1155px;top:344.5px;width:50px;height:22px;" class="btn"></div>
<div style="left:1160px;top:340px;width:28px;height:28px;overflow:hidden;"><div class="t" style="left:2px;top:8.4px;font-size:15px;color:#d8d8d8;">none</div></div>
<svg style="left:1191.5px;top:353.0px" width="8" height="5" viewBox="0 0 8 5"><path d="M0 0 L8 0 L4.0 5 Z" fill="#e8e8e8"/></svg>
<div class="btn" style="left:1219px;top:347.5px;width:20.00px;height:17.00px;"></div><div style="left:1224px;top:354.5px;width:10.00px;height:3.00px;background:#c8c8c8;"></div>
<svg style="left:819.5px;top:374.4px" width="11.5" height="10" viewBox="0 0 11.5 10"><path d="M0 0 H11.5 L5.75 10 Z" fill="#000"/></svg>
<div class="t" style="left:840px;top:375.6px;font-size:15px;color:#d8d8d8;">master</div>
<div class="t" style="left:484px;width:400px;text-align:right;top:401.3px;font-size:15px;color:#d8d8d8;letter-spacing:0.35px;">saturation</div>
<div class="fld" style="left:892.5px;top:397.6px;width:89.50px;height:22.50px;"></div>
<div class="t" style="left:897px;top:401.7px;font-size:15px;color:#e8e8e8;">1</div>
<svg style="left:986px;top:397.6px" width="154" height="22" viewBox="0 0 154 22"><path d="M0.8 0 V9.5" stroke="#262626" stroke-width="1"/><path d="M8.3 3 V9.5" stroke="#262626" stroke-width="1"/><path d="M17.4 3 V9.5" stroke="#262626" stroke-width="1"/><path d="M24.9 0 V9.5" stroke="#262626" stroke-width="1"/><path d="M34.9 3 V9.5" stroke="#262626" stroke-width="1"/><path d="M41.75 3 V9.5" stroke="#262626" stroke-width="1"/><path d="M48 3 V9.5" stroke="#262626" stroke-width="1"/><path d="M54.6 3 V9.5" stroke="#262626" stroke-width="1"/><path d="M58.6 3 V9.5" stroke="#262626" stroke-width="1"/><path d="M64.9 3 V9.5" stroke="#262626" stroke-width="1"/><path d="M69.9 3 V9.5" stroke="#262626" stroke-width="1"/><path d="M76.4 0 V9.5" stroke="#262626" stroke-width="1"/><path d="M107.75 3 V9.5" stroke="#262626" stroke-width="1"/><path d="M132 3 V9.5" stroke="#262626" stroke-width="1"/><path d="M152.75 3 V9.5" stroke="#262626" stroke-width="1"/><rect x="0" y="8.1" width="154" height="1.9" fill="#151515"/><rect x="0" y="10" width="154" height="1.5" fill="#4a4a4a"/><rect x="0" y="11.5" width="154" height="1.9" fill="#151515"/><text x="0.8" y="21.5" font-size="6.5" fill="#262626" font-family="Liberation Sans">0</text><text x="77" y="21.5" font-size="6.5" fill="#262626" font-family="Liberation Sans">1</text><text x="108" y="21.5" font-size="6.5" fill="#262626" font-family="Liberation Sans">2</text><text x="150" y="21.5" font-size="6.5" fill="#262626" font-family="Liberation Sans">4</text><rect x="73.9" y="4" width="5" height="10" fill="#8a7738" stroke="#2c2610" stroke-width="0.7"/></svg>
<div style="left:1145px;top:397.6px;width:92.00px;height:22.50px;background:#444;border:1px solid #292929;border-radius:3px;"></div>
<div style="left:1165.45px;top:397.6px;width:1.60px;height:22.50px;background:#2c2c2c;"></div>
<div style="left:1189.2px;top:397.6px;width:1.60px;height:22.50px;background:#2c2c2c;"></div>
<div style="left:1212.95px;top:397.6px;width:1.60px;height:22.50px;background:#2c2c2c;"></div>
<div style="left:1147.5px;top:401.8px;width:15.50px;height:14.80px;background:#fff;border:1.5px solid #1a1a1a;border-radius:1px;"></div>
<div style="left:1171.0px;top:400.90000000000003px;width:15px;height:15px;border-radius:50%;background:radial-gradient(circle at 50% 50%,rgba(255,255,255,.85) 0,rgba(255,255,255,.25) 55%,rgba(255,255,255,0) 80%),conic-gradient(from 0deg,#d050ff,#ff50c0 50deg,#ff9060 100deg,#e8f040 150deg,#60f060 200deg,#40e8c0 250deg,#50a0ff 300deg,#d050ff);"></div>
<div class="t" style="left:1001.5px;width:400px;text-align:center;top:401.7px;font-size:15px;color:#d8d8d8;">4</div>
<svg style="left:1217px;top:400.6px" width="18" height="17" viewBox="0 0 18 17"><path d="M1.2 16.5 C3 10.5 5 6.8 7 7.5 C9 8.5 9.5 14.8 11.5 14.5 C13.5 14 15.5 8 17 3.3" fill="none" stroke="#151515" stroke-width="1.9" stroke-linecap="round"/></svg>
<div class="t" style="left:484px;width:400px;text-align:right;top:428.3px;font-size:15px;color:#d8d8d8;letter-spacing:0.2px;">contrast</div>
<div class="fld" style="left:892.5px;top:424.6px;width:89.50px;height:22.50px;"></div>
<div class="t" style="left:897px;top:428.7px;font-size:15px;color:#e8e8e8;">1</div>
<svg style="left:986px;top:424.6px" width="154" height="22" viewBox="0 0 154 22"><path d="M0.8 0 V9.5" stroke="#262626" stroke-width="1"/><path d="M8.3 3 V9.5" stroke="#262626" stroke-width="1"/><path d="M17.4 3 V9.5" stroke="#262626" stroke-width="1"/><path d="M24.9 0 V9.5" stroke="#262626" stroke-width="1"/><path d="M34.9 3 V9.5" stroke="#262626" stroke-width="1"/><path d="M41.75 3 V9.5" stroke="#262626" stroke-width="1"/><path d="M48 3 V9.5" stroke="#262626" stroke-width="1"/><path d="M54.6 3 V9.5" stroke="#262626" stroke-width="1"/><path d="M58.6 3 V9.5" stroke="#262626" stroke-width="1"/><path d="M64.9 3 V9.5" stroke="#262626" stroke-width="1"/><path d="M69.9 3 V9.5" stroke="#262626" stroke-width="1"/><path d="M76.4 0 V9.5" stroke="#262626" stroke-width="1"/><path d="M107.75 3 V9.5" stroke="#262626" stroke-width="1"/><path d="M132 3 V9.5" stroke="#262626" stroke-width="1"/><path d="M152.75 3 V9.5" stroke="#262626" stroke-width="1"/><rect x="0" y="8.1" width="154" height="1.9" fill="#151515"/><rect x="0" y="10" width="154" height="1.5" fill="#4a4a4a"/><rect x="0" y="11.5" width="154" height="1.9" fill="#151515"/><text x="0.8" y="21.5" font-size="6.5" fill="#262626" font-family="Liberation Sans">0</text><text x="77" y="21.5" font-size="6.5" fill="#262626" font-family="Liberation Sans">1</text><text x="108" y="21.5" font-size="6.5" fill="#262626" font-family="Liberation Sans">2</text><text x="150" y="21.5" font-size="6.5" fill="#262626" font-family="Liberation Sans">4</text><rect x="73.9" y="4" width="5" height="10" fill="#8a7738" stroke="#2c2610" stroke-width="0.7"/></svg>
<div style="left:1145px;top:424.6px;width:92.00px;height:22.50px;background:#444;border:1px solid #292929;border-radius:3px;"></div>
<div style="left:1165.45px;top:424.6px;width:1.60px;height:22.50px;background:#2c2c2c;"></div>
<div style="left:1189.2px;top:424.6px;width:1.60px;height:22.50px;background:#2c2c2c;"></div>
<div style="left:1212.95px;top:424.6px;width:1.60px;height:22.50px;background:#2c2c2c;"></div>
<div style="left:1147.5px;top:428.8px;width:15.50px;height:14.80px;background:#fff;border:1.5px solid #1a1a1a;border-radius:1px;"></div>
<div style="left:1171.0px;top:427.90000000000003px;width:15px;height:15px;border-radius:50%;background:radial-gradient(circle at 50% 50%,rgba(255,255,255,.85) 0,rgba(255,255,255,.25) 55%,rgba(255,255,255,0) 80%),conic-gradient(from 0deg,#d050ff,#ff50c0 50deg,#ff9060 100deg,#e8f040 150deg,#60f060 200deg,#40e8c0 250deg,#50a0ff 300deg,#d050ff);"></div>
<div class="t" style="left:1001.5px;width:400px;text-align:center;top:428.7px;font-size:15px;color:#d8d8d8;">4</div>
<svg style="left:1217px;top:427.6px" width="18" height="17" viewBox="0 0 18 17"><path d="M1.2 16.5 C3 10.5 5 6.8 7 7.5 C9 8.5 9.5 14.8 11.5 14.5 C13.5 14 15.5 8 17 3.3" fill="none" stroke="#151515" stroke-width="1.9" stroke-linecap="round"/></svg>
<div class="t" style="left:484px;width:400px;text-align:right;top:455.3px;font-size:15px;color:#d8d8d8;letter-spacing:0px;">gamma</div>
<div class="fld" style="left:892.5px;top:451.6px;width:89.50px;height:22.50px;"></div>
<div class="t" style="left:897px;top:455.7px;font-size:15px;color:#e8e8e8;">1</div>
<svg style="left:986px;top:451.6px" width="154" height="22" viewBox="0 0 154 22"><path d="M0.8 0 V9.5" stroke="#262626" stroke-width="1"/><path d="M19 3 V9.5" stroke="#262626" stroke-width="1"/><path d="M33 3 V9.5" stroke="#262626" stroke-width="1"/><path d="M43 3 V9.5" stroke="#262626" stroke-width="1"/><path d="M50 3 V9.5" stroke="#262626" stroke-width="1"/><path d="M63 3 V9.5" stroke="#262626" stroke-width="1"/><path d="M76.4 0 V9.5" stroke="#262626" stroke-width="1"/><path d="M107 3 V9.5" stroke="#262626" stroke-width="1"/><path d="M127 3 V9.5" stroke="#262626" stroke-width="1"/><path d="M140 3 V9.5" stroke="#262626" stroke-width="1"/><path d="M152.75 3 V9.5" stroke="#262626" stroke-width="1"/><rect x="0" y="8.1" width="154" height="1.9" fill="#151515"/><rect x="0" y="10" width="154" height="1.5" fill="#4a4a4a"/><rect x="0" y="11.5" width="154" height="1.9" fill="#151515"/><text x="0.5" y="21.5" font-size="6.5" fill="#262626" font-family="Liberation Sans">0.2</text><text x="9" y="21.5" font-size="6.5" fill="#262626" font-family="Liberation Sans">0.3</text><text x="77" y="21.5" font-size="6.5" fill="#262626" font-family="Liberation Sans">1</text><text x="127" y="21.5" font-size="6.5" fill="#262626" font-family="Liberation Sans">3</text><text x="150" y="21.5" font-size="6.5" fill="#262626" font-family="Liberation Sans">5</text><rect x="73.9" y="4" width="5" height="10" fill="#8a7738" stroke="#2c2610" stroke-width="0.7"/></svg>
<div style="left:1145px;top:451.6px;width:92.00px;height:22.50px;background:#444;border:1px solid #292929;border-radius:3px;"></div>
<div style="left:1165.45px;top:451.6px;width:1.60px;height:22.50px;background:#2c2c2c;"></div>
<div style="left:1189.2px;top:451.6px;width:1.60px;height:22.50px;background:#2c2c2c;"></div>
<div style="left:1212.95px;top:451.6px;width:1.60px;height:22.50px;background:#2c2c2c;"></div>
<div style="left:1147.5px;top:455.8px;width:15.50px;height:14.80px;background:#fff;border:1.5px solid #1a1a1a;border-radius:1px;"></div>
<div style="left:1171.0px;top:454.90000000000003px;width:15px;height:15px;border-radius:50%;background:radial-gradient(circle at 50% 50%,rgba(255,255,255,.85) 0,rgba(255,255,255,.25) 55%,rgba(255,255,255,0) 80%),conic-gradient(from 0deg,#d050ff,#ff50c0 50deg,#ff9060 100deg,#e8f040 150deg,#60f060 200deg,#40e8c0 250deg,#50a0ff 300deg,#d050ff);"></div>
<div class="t" style="left:1001.5px;width:400px;text-align:center;top:455.7px;font-size:15px;color:#d8d8d8;">4</div>
<svg style="left:1217px;top:454.6px" width="18" height="17" viewBox="0 0 18 17"><path d="M1.2 16.5 C3 10.5 5 6.8 7 7.5 C9 8.5 9.5 14.8 11.5 14.5 C13.5 14 15.5 8 17 3.3" fill="none" stroke="#151515" stroke-width="1.9" stroke-linecap="round"/></svg>
<div class="t" style="left:484px;width:400px;text-align:right;top:482.3px;font-size:15px;color:#d8d8d8;letter-spacing:0px;">gain</div>
<div class="fld" style="left:892.5px;top:478.6px;width:89.50px;height:22.50px;"></div>
<div class="t" style="left:897px;top:482.7px;font-size:15px;color:#e8e8e8;">2</div>
<svg style="left:986px;top:478.6px" width="154" height="22" viewBox="0 0 154 22"><path d="M0.8 0 V9.5" stroke="#262626" stroke-width="1"/><path d="M8.3 3 V9.5" stroke="#262626" stroke-width="1"/><path d="M17.4 3 V9.5" stroke="#262626" stroke-width="1"/><path d="M24.9 0 V9.5" stroke="#262626" stroke-width="1"/><path d="M34.9 3 V9.5" stroke="#262626" stroke-width="1"/><path d="M41.75 3 V9.5" stroke="#262626" stroke-width="1"/><path d="M48 3 V9.5" stroke="#262626" stroke-width="1"/><path d="M54.6 3 V9.5" stroke="#262626" stroke-width="1"/><path d="M58.6 3 V9.5" stroke="#262626" stroke-width="1"/><path d="M64.9 3 V9.5" stroke="#262626" stroke-width="1"/><path d="M69.9 3 V9.5" stroke="#262626" stroke-width="1"/><path d="M76.4 0 V9.5" stroke="#262626" stroke-width="1"/><path d="M107.75 3 V9.5" stroke="#262626" stroke-width="1"/><path d="M132 3 V9.5" stroke="#262626" stroke-width="1"/><path d="M152.75 3 V9.5" stroke="#262626" stroke-width="1"/><rect x="0" y="8.1" width="154" height="1.9" fill="#151515"/><rect x="0" y="10" width="154" height="1.5" fill="#4a4a4a"/><rect x="0" y="11.5" width="154" height="1.9" fill="#151515"/><text x="0.8" y="21.5" font-size="6.5" fill="#262626" font-family="Liberation Sans">0</text><text x="77" y="21.5" font-size="6.5" fill="#262626" font-family="Liberation Sans">1</text><text x="108" y="21.5" font-size="6.5" fill="#262626" font-family="Liberation Sans">2</text><text x="150" y="21.5" font-size="6.5" fill="#262626" font-family="Liberation Sans">4</text><rect x="105.25" y="4" width="5" height="10" fill="#8a7738" stroke="#2c2610" stroke-width="0.7"/></svg>
<div style="left:1145px;top:478.6px;width:92.00px;height:22.50px;background:#444;border:1px solid #292929;border-radius:3px;"></div>
<div style="left:1165.45px;top:478.6px;width:1.60px;height:22.50px;background:#2c2c2c;"></div>
<div style="left:1189.2px;top:478.6px;width:1.60px;height:22.50px;background:#2c2c2c;"></div>
<div style="left:1212.95px;top:478.6px;width:1.60px;height:22.50px;background:#2c2c2c;"></div>
<div style="left:1147.5px;top:482.8px;width:15.50px;height:14.80px;background:#fff;border:1.5px solid #1a1a1a;border-radius:1px;"></div>
<div style="left:1171.0px;top:481.90000000000003px;width:15px;height:15px;border-radius:50%;background:radial-gradient(circle at 50% 50%,rgba(255,255,255,.85) 0,rgba(255,255,255,.25) 55%,rgba(255,255,255,0) 80%),conic-gradient(from 0deg,#d050ff,#ff50c0 50deg,#ff9060 100deg,#e8f040 150deg,#60f060 200deg,#40e8c0 250deg,#50a0ff 300deg,#d050ff);"></div>
<div class="t" style="left:1001.5px;width:400px;text-align:center;top:482.7px;font-size:15px;color:#d8d8d8;">4</div>
<svg style="left:1217px;top:481.6px" width="18" height="17" viewBox="0 0 18 17"><path d="M1.2 16.5 C3 10.5 5 6.8 7 7.5 C9 8.5 9.5 14.8 11.5 14.5 C13.5 14 15.5 8 17 3.3" fill="none" stroke="#151515" stroke-width="1.9" stroke-linecap="round"/></svg>
<div class="t" style="left:484px;width:400px;text-align:right;top:509.3px;font-size:15px;color:#d8d8d8;letter-spacing:0px;">offset</div>
<div class="fld" style="left:892.5px;top:505.6px;width:89.50px;height:22.50px;"></div>
<div class="t" style="left:897px;top:509.7px;font-size:15px;color:#e8e8e8;">0</div>
<svg style="left:986px;top:505.6px" width="154" height="22" viewBox="0 0 154 22"><path d="M0.8 3 V9.5" stroke="#262626" stroke-width="1"/><path d="M5.8 3 V9.5" stroke="#262626" stroke-width="1"/><path d="M10.8 3 V9.5" stroke="#262626" stroke-width="1"/><path d="M15.8 3 V9.5" stroke="#262626" stroke-width="1"/><path d="M20.8 3 V9.5" stroke="#262626" stroke-width="1"/><path d="M25.8 3 V9.5" stroke="#262626" stroke-width="1"/><path d="M30.8 3 V9.5" stroke="#262626" stroke-width="1"/><path d="M35.8 3 V9.5" stroke="#262626" stroke-width="1"/><path d="M40.8 3 V9.5" stroke="#262626" stroke-width="1"/><path d="M45.8 3 V9.5" stroke="#262626" stroke-width="1"/><path d="M50.8 3 V9.5" stroke="#262626" stroke-width="1"/><path d="M55.8 3 V9.5" stroke="#262626" stroke-width="1"/><path d="M60.8 3 V9.5" stroke="#262626" stroke-width="1"/><path d="M65.8 3 V9.5" stroke="#262626" stroke-width="1"/><path d="M70.8 3 V9.5" stroke="#262626" stroke-width="1"/><path d="M76.4 0 V9.5" stroke="#262626" stroke-width="1"/><path d="M85.9 3 V9.5" stroke="#262626" stroke-width="1"/><path d="M95.4 3 V9.5" stroke="#262626" stroke-width="1"/><path d="M104.9 3 V9.5" stroke="#262626" stroke-width="1"/><path d="M114.4 3 V9.5" stroke="#262626" stroke-width="1"/><path d="M123.9 3 V9.5" stroke="#262626" stroke-width="1"/><path d="M133.4 3 V9.5" stroke="#262626" stroke-width="1"/><path d="M142.9 3 V9.5" stroke="#262626" stroke-width="1"/><path d="M152.75 3 V9.5" stroke="#262626" stroke-width="1"/><rect x="0" y="8.1" width="154" height="1.9" fill="#151515"/><rect x="0" y="10" width="154" height="1.5" fill="#4a4a4a"/><rect x="0" y="11.5" width="154" height="1.9" fill="#151515"/><text x="0" y="21.5" font-size="6.5" fill="#262626" font-family="Liberation Sans">-1</text><text x="77" y="21.5" font-size="6.5" fill="#262626" font-family="Liberation Sans">0</text><text x="150" y="21.5" font-size="6.5" fill="#262626" font-family="Liberation Sans">1</text><rect x="73.9" y="4" width="5" height="10" fill="#8a7738" stroke="#2c2610" stroke-width="0.7"/></svg>
<div style="left:1145px;top:505.6px;width:92.00px;height:22.50px;background:#444;border:1px solid #292929;border-radius:3px;"></div>
<div style="left:1165.45px;top:505.6px;width:1.60px;height:22.50px;background:#2c2c2c;"></div>
<div style="left:1189.2px;top:505.6px;width:1.60px;height:22.50px;background:#2c2c2c;"></div>
<div style="left:1212.95px;top:505.6px;width:1.60px;height:22.50px;background:#2c2c2c;"></div>
<div style="left:1147.5px;top:509.8px;width:15.50px;height:14.80px;background:#000;border:1.5px solid #1a1a1a;border-radius:1px;"></div>
<div style="left:1171.0px;top:508.9px;width:15px;height:15px;border-radius:50%;background:radial-gradient(circle at 50% 50%,rgba(255,255,255,.85) 0,rgba(255,255,255,.25) 55%,rgba(255,255,255,0) 80%),conic-gradient(from 0deg,#d050ff,#ff50c0 50deg,#ff9060 100deg,#e8f040 150deg,#60f060 200deg,#40e8c0 250deg,#50a0ff 300deg,#d050ff);"></div>
<div class="t" style="left:1001.5px;width:400px;text-align:center;top:509.7px;font-size:15px;color:#d8d8d8;">4</div>
<svg style="left:1217px;top:508.6px" width="18" height="17" viewBox="0 0 18 17"><path d="M1.2 16.5 C3 10.5 5 6.8 7 7.5 C9 8.5 9.5 14.8 11.5 14.5 C13.5 14 15.5 8 17 3.3" fill="none" stroke="#151515" stroke-width="1.9" stroke-linecap="round"/></svg>
<svg style="left:819.5px;top:536.4px" width="11.5" height="10" viewBox="0 0 11.5 10"><path d="M0 0 H11.5 L5.75 10 Z" fill="#000"/></svg>
<div class="t" style="left:840px;top:537.6px;font-size:15px;color:#d8d8d8;">shadows</div>
<div class="t" style="left:484px;width:400px;text-align:right;top:563.3px;font-size:15px;color:#d8d8d8;letter-spacing:0.35px;">saturation</div>
<div class="fld" style="left:892.5px;top:559.6px;width:89.50px;height:22.50px;"></div>
<div class="t" style="left:897px;top:563.7px;font-size:15px;color:#e8e8e8;">1</div>
<svg style="left:986px;top:559.6px" width="154" height="22" viewBox="0 0 154 22"><path d="M0.8 0 V9.5" stroke="#262626" stroke-width="1"/><path d="M8.3 3 V9.5" stroke="#262626" stroke-width="1"/><path d="M17.4 3 V9.5" stroke="#262626" stroke-width="1"/><path d="M24.9 0 V9.5" stroke="#262626" stroke-width="1"/><path d="M34.9 3 V9.5" stroke="#262626" stroke-width="1"/><path d="M41.75 3 V9.5" stroke="#262626" stroke-width="1"/><path d="M48 3 V9.5" stroke="#262626" stroke-width="1"/><path d="M54.6 3 V9.5" stroke="#262626" stroke-width="1"/><path d="M58.6 3 V9.5" stroke="#262626" stroke-width="1"/><path d="M64.9 3 V9.5" stroke="#262626" stroke-width="1"/><path d="M69.9 3 V9.5" stroke="#262626" stroke-width="1"/><path d="M76.4 0 V9.5" stroke="#262626" stroke-width="1"/><path d="M107.75 3 V9.5" stroke="#262626" stroke-width="1"/><path d="M132 3 V9.5" stroke="#262626" stroke-width="1"/><path d="M152.75 3 V9.5" stroke="#262626" stroke-width="1"/><rect x="0" y="8.1" width="154" height="1.9" fill="#151515"/><rect x="0" y="10" width="154" height="1.5" fill="#4a4a4a"/><rect x="0" y="11.5" width="154" height="1.9" fill="#151515"/><text x="0.8" y="21.5" font-size="6.5" fill="#262626" font-family="Liberation Sans">0</text><text x="77" y="21.5" font-size="6.5" fill="#262626" font-family="Liberation Sans">1</text><text x="108" y="21.5" font-size="6.5" fill="#262626" font-family="Liberation Sans">2</text><text x="150" y="21.5" font-size="6.5" fill="#262626" font-family="Liberation Sans">4</text><rect x="73.9" y="4" width="5" height="10" fill="#8a7738" stroke="#2c2610" stroke-width="0.7"/></svg>
<div style="left:1145px;top:559.6px;width:92.00px;height:22.50px;background:#444;border:1px solid #292929;border-radius:3px;"></div>
<div style="left:1165.45px;top:559.6px;width:1.60px;height:22.50px;background:#2c2c2c;"></div>
<div style="left:1189.2px;top:559.6px;width:1.60px;height:22.50px;background:#2c2c2c;"></div>
<div style="left:1212.95px;top:559.6px;width:1.60px;height:22.50px;background:#2c2c2c;"></div>
<div style="left:1147.5px;top:563.8000000000001px;width:15.50px;height:14.80px;background:#fff;border:1.5px solid #1a1a1a;border-radius:1px;"></div>
<div style="left:1171.0px;top:562.9px;width:15px;height:15px;border-radius:50%;background:radial-gradient(circle at 50% 50%,rgba(255,255,255,.85) 0,rgba(255,255,255,.25) 55%,rgba(255,255,255,0) 80%),conic-gradient(from 0deg,#d050ff,#ff50c0 50deg,#ff9060 100deg,#e8f040 150deg,#60f060 200deg,#40e8c0 250deg,#50a0ff 300deg,#d050ff);"></div>
<div class="t" style="left:1001.5px;width:400px;text-align:center;top:563.7px;font-size:15px;color:#d8d8d8;">4</div>
<svg style="left:1217px;top:562.6px" width="18" height="17" viewBox="0 0 18 17"><path d="M1.2 16.5 C3 10.5 5 6.8 7 7.5 C9 8.5 9.5 14.8 11.5 14.5 C13.5 14 15.5 8 17 3.3" fill="none" stroke="#151515" stroke-width="1.9" stroke-linecap="round"/></svg>
<div class="t" style="left:484px;width:400px;text-align:right;top:590.3px;font-size:15px;color:#d8d8d8;letter-spacing:0.2px;">contrast</div>
<div class="fld" style="left:892.5px;top:586.6px;width:89.50px;height:22.50px;"></div>
<div class="t" style="left:897px;top:590.7px;font-size:15px;color:#e8e8e8;">1</div>
<svg style="left:986px;top:586.6px" width="154" height="22" viewBox="0 0 154 22"><path d="M0.8 0 V9.5" stroke="#262626" stroke-width="1"/><path d="M8.3 3 V9.5" stroke="#262626" stroke-width="1"/><path d="M17.4 3 V9.5" stroke="#262626" stroke-width="1"/><path d="M24.9 0 V9.5" stroke="#262626" stroke-width="1"/><path d="M34.9 3 V9.5" stroke="#262626" stroke-width="1"/><path d="M41.75 3 V9.5" stroke="#262626" stroke-width="1"/><path d="M48 3 V9.5" stroke="#262626" stroke-width="1"/><path d="M54.6 3 V9.5" stroke="#262626" stroke-width="1"/><path d="M58.6 3 V9.5" stroke="#262626" stroke-width="1"/><path d="M64.9 3 V9.5" stroke="#262626" stroke-width="1"/><path d="M69.9 3 V9.5" stroke="#262626" stroke-width="1"/><path d="M76.4 0 V9.5" stroke="#262626" stroke-width="1"/><path d="M107.75 3 V9.5" stroke="#262626" stroke-width="1"/><path d="M132 3 V9.5" stroke="#262626" stroke-width="1"/><path d="M152.75 3 V9.5" stroke="#262626" stroke-width="1"/><rect x="0" y="8.1" width="154" height="1.9" fill="#151515"/><rect x="0" y="10" width="154" height="1.5" fill="#4a4a4a"/><rect x="0" y="11.5" width="154" height="1.9" fill="#151515"/><text x="0.8" y="21.5" font-size="6.5" fill="#262626" font-family="Liberation Sans">0</text><text x="77" y="21.5" font-size="6.5" fill="#262626" font-family="Liberation Sans">1</text><text x="108" y="21.5" font-size="6.5" fill="#262626" font-family="Liberation Sans">2</text><text x="150" y="21.5" font-size="6.5" fill="#262626" font-family="Liberation Sans">4</text><rect x="73.9" y="4" width="5" height="10" fill="#8a7738" stroke="#2c2610" stroke-width="0.7"/></svg>
<div style="left:1145px;top:586.6px;width:92.00px;height:22.50px;background:#444;border:1px solid #292929;border-radius:3px;"></div>
<div style="left:1165.45px;top:586.6px;width:1.60px;height:22.50px;background:#2c2c2c;"></div>
<div style="left:1189.2px;top:586.6px;width:1.60px;height:22.50px;background:#2c2c2c;"></div>
<div style="left:1212.95px;top:586.6px;width:1.60px;height:22.50px;background:#2c2c2c;"></div>
<div style="left:1147.5px;top:590.8000000000001px;width:15.50px;height:14.80px;background:#fff;border:1.5px solid #1a1a1a;border-radius:1px;"></div>
<div style="left:1171.0px;top:589.9px;width:15px;height:15px;border-radius:50%;background:radial-gradient(circle at 50% 50%,rgba(255,255,255,.85) 0,rgba(255,255,255,.25) 55%,rgba(255,255,255,0) 80%),conic-gradient(from 0deg,#d050ff,#ff50c0 50deg,#ff9060 100deg,#e8f040 150deg,#60f060 200deg,#40e8c0 250deg,#50a0ff 300deg,#d050ff);"></div>
<div class="t" style="left:1001.5px;width:400px;text-align:center;top:590.7px;font-size:15px;color:#d8d8d8;">4</div>
<svg style="left:1217px;top:589.6px" width="18" height="17" viewBox="0 0 18 17"><path d="M1.2 16.5 C3 10.5 5 6.8 7 7.5 C9 8.5 9.5 14.8 11.5 14.5 C13.5 14 15.5 8 17 3.3" fill="none" stroke="#151515" stroke-width="1.9" stroke-linecap="round"/></svg>
<div class="t" style="left:484px;width:400px;text-align:right;top:617.3px;font-size:15px;color:#d8d8d8;letter-spacing:0px;">gamma</div>
<div class="fld" style="left:892.5px;top:613.6px;width:89.50px;height:22.50px;"></div>
<div class="t" style="left:897px;top:617.7px;font-size:15px;color:#e8e8e8;">1</div>
<svg style="left:986px;top:613.6px" width="154" height="22" viewBox="0 0 154 22"><path d="M0.8 0 V9.5" stroke="#262626" stroke-width="1"/><path d="M19 3 V9.5" stroke="#262626" stroke-width="1"/><path d="M33 3 V9.5" stroke="#262626" stroke-width="1"/><path d="M43 3 V9.5" stroke="#262626" stroke-width="1"/><path d="M50 3 V9.5" stroke="#262626" stroke-width="1"/><path d="M63 3 V9.5" stroke="#262626" stroke-width="1"/><path d="M76.4 0 V9.5" stroke="#262626" stroke-width="1"/><path d="M107 3 V9.5" stroke="#262626" stroke-width="1"/><path d="M127 3 V9.5" stroke="#262626" stroke-width="1"/><path d="M140 3 V9.5" stroke="#262626" stroke-width="1"/><path d="M152.75 3 V9.5" stroke="#262626" stroke-width="1"/><rect x="0" y="8.1" width="154" height="1.9" fill="#151515"/><rect x="0" y="10" width="154" height="1.5" fill="#4a4a4a"/><rect x="0" y="11.5" width="154" height="1.9" fill="#151515"/><text x="0.5" y="21.5" font-size="6.5" fill="#262626" font-family="Liberation Sans">0.2</text><text x="9" y="21.5" font-size="6.5" fill="#262626" font-family="Liberation Sans">0.3</text><text x="77" y="21.5" font-size="6.5" fill="#262626" font-family="Liberation Sans">1</text><text x="127" y="21.5" font-size="6.5" fill="#262626" font-family="Liberation Sans">3</text><text x="150" y="21.5" font-size="6.5" fill="#262626" font-family="Liberation Sans">5</text><rect x="73.9" y="4" width="5" height="10" fill="#8a7738" stroke="#2c2610" stroke-width="0.7"/></svg>
<div style="left:1145px;top:613.6px;width:92.00px;height:22.50px;background:#444;border:1px solid #292929;border-radius:3px;"></div>
<div style="left:1165.45px;top:613.6px;width:1.60px;height:22.50px;background:#2c2c2c;"></div>
<div style="left:1189.2px;top:613.6px;width:1.60px;height:22.50px;background:#2c2c2c;"></div>
<div style="left:1212.95px;top:613.6px;width:1.60px;height:22.50px;background:#2c2c2c;"></div>
<div style="left:1147.5px;top:617.8000000000001px;width:15.50px;height:14.80px;background:#fff;border:1.5px solid #1a1a1a;border-radius:1px;"></div>
<div style="left:1171.0px;top:616.9px;width:15px;height:15px;border-radius:50%;background:radial-gradient(circle at 50% 50%,rgba(255,255,255,.85) 0,rgba(255,255,255,.25) 55%,rgba(255,255,255,0) 80%),conic-gradient(from 0deg,#d050ff,#ff50c0 50deg,#ff9060 100deg,#e8f040 150deg,#60f060 200deg,#40e8c0 250deg,#50a0ff 300deg,#d050ff);"></div>
<div class="t" style="left:1001.5px;width:400px;text-align:center;top:617.7px;font-size:15px;color:#d8d8d8;">4</div>
<svg style="left:1217px;top:616.6px" width="18" height="17" viewBox="0 0 18 17"><path d="M1.2 16.5 C3 10.5 5 6.8 7 7.5 C9 8.5 9.5 14.8 11.5 14.5 C13.5 14 15.5 8 17 3.3" fill="none" stroke="#151515" stroke-width="1.9" stroke-linecap="round"/></svg>
<div class="t" style="left:484px;width:400px;text-align:right;top:644.3px;font-size:15px;color:#d8d8d8;letter-spacing:0px;">gain</div>
<div class="fld" style="left:892.5px;top:640.6px;width:89.50px;height:22.50px;"></div>
<div class="t" style="left:897px;top:644.7px;font-size:15px;color:#e8e8e8;">1</div>
<svg style="left:986px;top:640.6px" width="154" height="22" viewBox="0 0 154 22"><path d="M0.8 0 V9.5" stroke="#262626" stroke-width="1"/><path d="M8.3 3 V9.5" stroke="#262626" stroke-width="1"/><path d="M17.4 3 V9.5" stroke="#262626" stroke-width="1"/><path d="M24.9 0 V9.5" stroke="#262626" stroke-width="1"/><path d="M34.9 3 V9.5" stroke="#262626" stroke-width="1"/><path d="M41.75 3 V9.5" stroke="#262626" stroke-width="1"/><path d="M48 3 V9.5" stroke="#262626" stroke-width="1"/><path d="M54.6 3 V9.5" stroke="#262626" stroke-width="1"/><path d="M58.6 3 V9.5" stroke="#262626" stroke-width="1"/><path d="M64.9 3 V9.5" stroke="#262626" stroke-width="1"/><path d="M69.9 3 V9.5" stroke="#262626" stroke-width="1"/><path d="M76.4 0 V9.5" stroke="#262626" stroke-width="1"/><path d="M107.75 3 V9.5" stroke="#262626" stroke-width="1"/><path d="M132 3 V9.5" stroke="#262626" stroke-width="1"/><path d="M152.75 3 V9.5" stroke="#262626" stroke-width="1"/><rect x="0" y="8.1" width="154" height="1.9" fill="#151515"/><rect x="0" y="10" width="154" height="1.5" fill="#4a4a4a"/><rect x="0" y="11.5" width="154" height="1.9" fill="#151515"/><text x="0.8" y="21.5" font-size="6.5" fill="#262626" font-family="Liberation Sans">0</text><text x="77" y="21.5" font-size="6.5" fill="#262626" font-family="Liberation Sans">1</text><text x="108" y="21.5" font-size="6.5" fill="#262626" font-family="Liberation Sans">2</text><text x="150" y="21.5" font-size="6.5" fill="#262626" font-family="Liberation Sans">4</text><rect x="73.9" y="4" width="5" height="10" fill="#8a7738" stroke="#2c2610" stroke-width="0.7"/></svg>
<div style="left:1145px;top:640.6px;width:92.00px;height:22.50px;background:#444;border:1px solid #292929;border-radius:3px;"></div>
<div style="left:1165.45px;top:640.6px;width:1.60px;height:22.50px;background:#2c2c2c;"></div>
<div style="left:1189.2px;top:640.6px;width:1.60px;height:22.50px;background:#2c2c2c;"></div>
<div style="left:1212.95px;top:640.6px;width:1.60px;height:22.50px;background:#2c2c2c;"></div>
<div style="left:1147.5px;top:644.8000000000001px;width:15.50px;height:14.80px;background:#fff;border:1.5px solid #1a1a1a;border-radius:1px;"></div>
<div style="left:1171.0px;top:643.9px;width:15px;height:15px;border-radius:50%;background:radial-gradient(circle at 50% 50%,rgba(255,255,255,.85) 0,rgba(255,255,255,.25) 55%,rgba(255,255,255,0) 80%),conic-gradient(from 0deg,#d050ff,#ff50c0 50deg,#ff9060 100deg,#e8f040 150deg,#60f060 200deg,#40e8c0 250deg,#50a0ff 300deg,#d050ff);"></div>
<div class="t" style="left:1001.5px;width:400px;text-align:center;top:644.7px;font-size:15px;color:#d8d8d8;">4</div>
<svg style="left:1217px;top:643.6px" width="18" height="17" viewBox="0 0 18 17"><path d="M1.2 16.5 C3 10.5 5 6.8 7 7.5 C9 8.5 9.5 14.8 11.5 14.5 C13.5 14 15.5 8 17 3.3" fill="none" stroke="#151515" stroke-width="1.9" stroke-linecap="round"/></svg>
<div class="t" style="left:484px;width:400px;text-align:right;top:671.3px;font-size:15px;color:#d8d8d8;letter-spacing:0px;">offset</div>
<div class="fld" style="left:892.5px;top:667.6px;width:89.50px;height:22.50px;"></div>
<div class="t" style="left:897px;top:671.7px;font-size:15px;color:#e8e8e8;">0</div>
<svg style="left:986px;top:667.6px" width="154" height="22" viewBox="0 0 154 22"><path d="M0.8 3 V9.5" stroke="#262626" stroke-width="1"/><path d="M5.8 3 V9.5" stroke="#262626" stroke-width="1"/><path d="M10.8 3 V9.5" stroke="#262626" stroke-width="1"/><path d="M15.8 3 V9.5" stroke="#262626" stroke-width="1"/><path d="M20.8 3 V9.5" stroke="#262626" stroke-width="1"/><path d="M25.8 3 V9.5" stroke="#262626" stroke-width="1"/><path d="M30.8 3 V9.5" stroke="#262626" stroke-width="1"/><path d="M35.8 3 V9.5" stroke="#262626" stroke-width="1"/><path d="M40.8 3 V9.5" stroke="#262626" stroke-width="1"/><path d="M45.8 3 V9.5" stroke="#262626" stroke-width="1"/><path d="M50.8 3 V9.5" stroke="#262626" stroke-width="1"/><path d="M55.8 3 V9.5" stroke="#262626" stroke-width="1"/><path d="M60.8 3 V9.5" stroke="#262626" stroke-width="1"/><path d="M65.8 3 V9.5" stroke="#262626" stroke-width="1"/><path d="M70.8 3 V9.5" stroke="#262626" stroke-width="1"/><path d="M76.4 0 V9.5" stroke="#262626" stroke-width="1"/><path d="M85.9 3 V9.5" stroke="#262626" stroke-width="1"/><path d="M95.4 3 V9.5" stroke="#262626" stroke-width="1"/><path d="M104.9 3 V9.5" stroke="#262626" stroke-width="1"/><path d="M114.4 3 V9.5" stroke="#262626" stroke-width="1"/><path d="M123.9 3 V9.5" stroke="#262626" stroke-width="1"/><path d="M133.4 3 V9.5" stroke="#262626" stroke-width="1"/><path d="M142.9 3 V9.5" stroke="#262626" stroke-width="1"/><path d="M152.75 3 V9.5" stroke="#262626" stroke-width="1"/><rect x="0" y="8.1" width="154" height="1.9" fill="#151515"/><rect x="0" y="10" width="154" height="1.5" fill="#4a4a4a"/><rect x="0" y="11.5" width="154" height="1.9" fill="#151515"/><text x="0" y="21.5" font-size="6.5" fill="#262626" font-family="Liberation Sans">-1</text><text x="77" y="21.5" font-size="6.5" fill="#262626" font-family="Liberation Sans">0</text><text x="150" y="21.5" font-size="6.5" fill="#262626" font-family="Liberation Sans">1</text><rect x="73.9" y="4" width="5" height="10" fill="#8a7738" stroke="#2c2610" stroke-width="0.7"/></svg>
<div style="left:1145px;top:667.6px;width:92.00px;height:22.50px;background:#444;border:1px solid #292929;border-radius:3px;"></div>
<div style="left:1165.45px;top:667.6px;width:1.60px;height:22.50px;background:#2c2c2c;"></div>
<div style="left:1189.2px;top:667.6px;width:1.60px;height:22.50px;background:#2c2c2c;"></div>
<div style="left:1212.95px;top:667.6px;width:1.60px;height:22.50px;background:#2c2c2c;"></div>
<div style="left:1147.5px;top:671.8000000000001px;width:15.50px;height:14.80px;background:#000;border:1.5px solid #1a1a1a;border-radius:1px;"></div>
<div style="left:1171.0px;top:670.9px;width:15px;height:15px;border-radius:50%;background:radial-gradient(circle at 50% 50%,rgba(255,255,255,.85) 0,rgba(255,255,255,.25) 55%,rgba(255,255,255,0) 80%),conic-gradient(from 0deg,#d050ff,#ff50c0 50deg,#ff9060 100deg,#e8f040 150deg,#60f060 200deg,#40e8c0 250deg,#50a0ff 300deg,#d050ff);"></div>
<div class="t" style="left:1001.5px;width:400px;text-align:center;top:671.7px;font-size:15px;color:#d8d8d8;">4</div>
<svg style="left:1217px;top:670.6px" width="18" height="17" viewBox="0 0 18 17"><path d="M1.2 16.5 C3 10.5 5 6.8 7 7.5 C9 8.5 9.5 14.8 11.5 14.5 C13.5 14 15.5 8 17 3.3" fill="none" stroke="#151515" stroke-width="1.9" stroke-linecap="round"/></svg>
<svg style="left:819.5px;top:698.4px" width="11.5" height="10" viewBox="0 0 11.5 10"><path d="M0 0 H11.5 L5.75 10 Z" fill="#000"/></svg>
<div class="t" style="left:840px;top:699.6px;font-size:15px;color:#d8d8d8;">midtones</div>
<div class="t" style="left:484px;width:400px;text-align:right;top:725.3px;font-size:15px;color:#d8d8d8;letter-spacing:0.35px;">saturation</div>
<div class="fld" style="left:892.5px;top:721.6px;width:89.50px;height:22.50px;"></div>
<div class="t" style="left:897px;top:725.7px;font-size:15px;color:#e8e8e8;">1</div>
<svg style="left:986px;top:721.6px" width="154" height="22" viewBox="0 0 154 22"><path d="M0.8 0 V9.5" stroke="#262626" stroke-width="1"/><path d="M8.3 3 V9.5" stroke="#262626" stroke-width="1"/><path d="M17.4 3 V9.5" stroke="#262626" stroke-width="1"/><path d="M24.9 0 V9.5" stroke="#262626" stroke-width="1"/><path d="M34.9 3 V9.5" stroke="#262626" stroke-width="1"/><path d="M41.75 3 V9.5" stroke="#262626" stroke-width="1"/><path d="M48 3 V9.5" stroke="#262626" stroke-width="1"/><path d="M54.6 3 V9.5" stroke="#262626" stroke-width="1"/><path d="M58.6 3 V9.5" stroke="#262626" stroke-width="1"/><path d="M64.9 3 V9.5" stroke="#262626" stroke-width="1"/><path d="M69.9 3 V9.5" stroke="#262626" stroke-width="1"/><path d="M76.4 0 V9.5" stroke="#262626" stroke-width="1"/><path d="M107.75 3 V9.5" stroke="#262626" stroke-width="1"/><path d="M132 3 V9.5" stroke="#262626" stroke-width="1"/><path d="M152.75 3 V9.5" stroke="#262626" stroke-width="1"/><rect x="0" y="8.1" width="154" height="1.9" fill="#151515"/><rect x="0" y="10" width="154" height="1.5" fill="#4a4a4a"/><rect x="0" y="11.5" width="154" height="1.9" fill="#151515"/><text x="0.8" y="21.5" font-size="6.5" fill="#262626" font-family="Liberation Sans">0</text><text x="77" y="21.5" font-size="6.5" fill="#262626" font-family="Liberation Sans">1</text><text x="108" y="21.5" font-size="6.5" fill="#262626" font-family="Liberation Sans">2</text><text x="150" y="21.5" font-size="6.5" fill="#262626" font-family="Liberation Sans">4</text><rect x="73.9" y="4" width="5" height="10" fill="#8a7738" stroke="#2c2610" stroke-width="0.7"/></svg>
<div style="left:1145px;top:721.6px;width:92.00px;height:22.50px;background:#444;border:1px solid #292929;border-radius:3px;"></div>
<div style="left:1165.45px;top:721.6px;width:1.60px;height:22.50px;background:#2c2c2c;"></div>
<div style="left:1189.2px;top:721.6px;width:1.60px;height:22.50px;background:#2c2c2c;"></div>
<div style="left:1212.95px;top:721.6px;width:1.60px;height:22.50px;background:#2c2c2c;"></div>
<div style="left:1147.5px;top:725.8000000000001px;width:15.50px;height:14.80px;background:#fff;border:1.5px solid #1a1a1a;border-radius:1px;"></div>
<div style="left:1171.0px;top:724.9px;width:15px;height:15px;border-radius:50%;background:radial-gradient(circle at 50% 50%,rgba(255,255,255,.85) 0,rgba(255,255,255,.25) 55%,rgba(255,255,255,0) 80%),conic-gradient(from 0deg,#d050ff,#ff50c0 50deg,#ff9060 100deg,#e8f040 150deg,#60f060 200deg,#40e8c0 250deg,#50a0ff 300deg,#d050ff);"></div>
<div class="t" style="left:1001.5px;width:400px;text-align:center;top:725.7px;font-size:15px;color:#d8d8d8;">4</div>
<svg style="left:1217px;top:724.6px" width="18" height="17" viewBox="0 0 18 17"><path d="M1.2 16.5 C3 10.5 5 6.8 7 7.5 C9 8.5 9.5 14.8 11.5 14.5 C13.5 14 15.5 8 17 3.3" fill="none" stroke="#151515" stroke-width="1.9" stroke-linecap="round"/></svg>
<div class="t" style="left:484px;width:400px;text-align:right;top:752.3px;font-size:15px;color:#d8d8d8;letter-spacing:0.2px;">contrast</div>
<div class="fld" style="left:892.5px;top:748.6px;width:89.50px;height:22.50px;"></div>
<div class="t" style="left:897px;top:752.7px;font-size:15px;color:#e8e8e8;">1</div>
<svg style="left:986px;top:748.6px" width="154" height="22" viewBox="0 0 154 22"><path d="M0.8 0 V9.5" stroke="#262626" stroke-width="1"/><path d="M8.3 3 V9.5" stroke="#262626" stroke-width="1"/><path d="M17.4 3 V9.5" stroke="#262626" stroke-width="1"/><path d="M24.9 0 V9.5" stroke="#262626" stroke-width="1"/><path d="M34.9 3 V9.5" stroke="#262626" stroke-width="1"/><path d="M41.75 3 V9.5" stroke="#262626" stroke-width="1"/><path d="M48 3 V9.5" stroke="#262626" stroke-width="1"/><path d="M54.6 3 V9.5" stroke="#262626" stroke-width="1"/><path d="M58.6 3 V9.5" stroke="#262626" stroke-width="1"/><path d="M64.9 3 V9.5" stroke="#262626" stroke-width="1"/><path d="M69.9 3 V9.5" stroke="#262626" stroke-width="1"/><path d="M76.4 0 V9.5" stroke="#262626" stroke-width="1"/><path d="M107.75 3 V9.5" stroke="#262626" stroke-width="1"/><path d="M132 3 V9.5" stroke="#262626" stroke-width="1"/><path d="M152.75 3 V9.5" stroke="#262626" stroke-width="1"/><rect x="0" y="8.1" width="154" height="1.9" fill="#151515"/><rect x="0" y="10" width="154" height="1.5" fill="#4a4a4a"/><rect x="0" y="11.5" width="154" height="1.9" fill="#151515"/><text x="0.8" y="21.5" font-size="6.5" fill="#262626" font-family="Liberation Sans">0</text><text x="77" y="21.5" font-size="6.5" fill="#262626" font-family="Liberation Sans">1</text><text x="108" y="21.5" font-size="6.5" fill="#262626" font-family="Liberation Sans">2</text><text x="150" y="21.5" font-size="6.5" fill="#262626" font-family="Liberation Sans">4</text><rect x="73.9" y="4" width="5" height="10" fill="#8a7738" stroke="#2c2610" stroke-width="0.7"/></svg>
<div style="left:1145px;top:748.6px;width:92.00px;height:22.50px;background:#444;border:1px solid #292929;border-radius:3px;"></div>
<div style="left:1165.45px;top:748.6px;width:1.60px;height:22.50px;background:#2c2c2c;"></div>
<div style="left:1189.2px;top:748.6px;width:1.60px;height:22.50px;background:#2c2c2c;"></div>
<div style="left:1212.95px;top:748.6px;width:1.60px;height:22.50px;background:#2c2c2c;"></div>
<div style="left:1147.5px;top:752.8000000000001px;width:15.50px;height:14.80px;background:#fff;border:1.5px solid #1a1a1a;border-radius:1px;"></div>
<div style="left:1171.0px;top:751.9px;width:15px;height:15px;border-radius:50%;background:radial-gradient(circle at 50% 50%,rgba(255,255,255,.85) 0,rgba(255,255,255,.25) 55%,rgba(255,255,255,0) 80%),conic-gradient(from 0deg,#d050ff,#ff50c0 50deg,#ff9060 100deg,#e8f040 150deg,#60f060 200deg,#40e8c0 250deg,#50a0ff 300deg,#d050ff);"></div>
<div class="t" style="left:1001.5px;width:400px;text-align:center;top:752.7px;font-size:15px;color:#d8d8d8;">4</div>
<svg style="left:1217px;top:751.6px" width="18" height="17" viewBox="0 0 18 17"><path d="M1.2 16.5 C3 10.5 5 6.8 7 7.5 C9 8.5 9.5 14.8 11.5 14.5 C13.5 14 15.5 8 17 3.3" fill="none" stroke="#151515" stroke-width="1.9" stroke-linecap="round"/></svg>
<div class="t" style="left:484px;width:400px;text-align:right;top:779.3px;font-size:15px;color:#d8d8d8;letter-spacing:0px;">gamma</div>
<div class="fld" style="left:892.5px;top:775.6px;width:89.50px;height:22.50px;"></div>
<div class="t" style="left:897px;top:779.7px;font-size:15px;color:#e8e8e8;">1</div>
<svg style="left:986px;top:775.6px" width="154" height="22" viewBox="0 0 154 22"><path d="M0.8 0 V9.5" stroke="#262626" stroke-width="1"/><path d="M19 3 V9.5" stroke="#262626" stroke-width="1"/><path d="M33 3 V9.5" stroke="#262626" stroke-width="1"/><path d="M43 3 V9.5" stroke="#262626" stroke-width="1"/><path d="M50 3 V9.5" stroke="#262626" stroke-width="1"/><path d="M63 3 V9.5" stroke="#262626" stroke-width="1"/><path d="M76.4 0 V9.5" stroke="#262626" stroke-width="1"/><path d="M107 3 V9.5" stroke="#262626" stroke-width="1"/><path d="M127 3 V9.5" stroke="#262626" stroke-width="1"/><path d="M140 3 V9.5" stroke="#262626" stroke-width="1"/><path d="M152.75 3 V9.5" stroke="#262626" stroke-width="1"/><rect x="0" y="8.1" width="154" height="1.9" fill="#151515"/><rect x="0" y="10" width="154" height="1.5" fill="#4a4a4a"/><rect x="0" y="11.5" width="154" height="1.9" fill="#151515"/><text x="0.5" y="21.5" font-size="6.5" fill="#262626" font-family="Liberation Sans">0.2</text><text x="9" y="21.5" font-size="6.5" fill="#262626" font-family="Liberation Sans">0.3</text><text x="77" y="21.5" font-size="6.5" fill="#262626" font-family="Liberation Sans">1</text><text x="127" y="21.5" font-size="6.5" fill="#262626" font-family="Liberation Sans">3</text><text x="150" y="21.5" font-size="6.5" fill="#262626" font-family="Liberation Sans">5</text><rect x="73.9" y="4" width="5" height="10" fill="#8a7738" stroke="#2c2610" stroke-width="0.7"/></svg>
<div style="left:1145px;top:775.6px;width:92.00px;height:22.50px;background:#444;border:1px solid #292929;border-radius:3px;"></div>
<div style="left:1165.45px;top:775.6px;width:1.60px;height:22.50px;background:#2c2c2c;"></div>
<div style="left:1189.2px;top:775.6px;width:1.60px;height:22.50px;background:#2c2c2c;"></div>
<div style="left:1212.95px;top:775.6px;width:1.60px;height:22.50px;background:#2c2c2c;"></div>
<div style="left:1147.5px;top:779.8000000000001px;width:15.50px;height:14.80px;background:#fff;border:1.5px solid #1a1a1a;border-radius:1px;"></div>
<div style="left:1171.0px;top:778.9px;width:15px;height:15px;border-radius:50%;background:radial-gradient(circle at 50% 50%,rgba(255,255,255,.85) 0,rgba(255,255,255,.25) 55%,rgba(255,255,255,0) 80%),conic-gradient(from 0deg,#d050ff,#ff50c0 50deg,#ff9060 100deg,#e8f040 150deg,#60f060 200deg,#40e8c0 250deg,#50a0ff 300deg,#d050ff);"></div>
<div class="t" style="left:1001.5px;width:400px;text-align:center;top:779.7px;font-size:15px;color:#d8d8d8;">4</div>
<svg style="left:1217px;top:778.6px" width="18" height="17" viewBox="0 0 18 17"><path d="M1.2 16.5 C3 10.5 5 6.8 7 7.5 C9 8.5 9.5 14.8 11.5 14.5 C13.5 14 15.5 8 17 3.3" fill="none" stroke="#151515" stroke-width="1.9" stroke-linecap="round"/></svg>
<div class="t" style="left:484px;width:400px;text-align:right;top:806.3px;font-size:15px;color:#d8d8d8;letter-spacing:0px;">gain</div>
<div class="fld" style="left:892.5px;top:802.6px;width:89.50px;height:22.50px;"></div>
<div class="t" style="left:897px;top:806.7px;font-size:15px;color:#e8e8e8;">1</div>
<svg style="left:986px;top:802.6px" width="154" height="22" viewBox="0 0 154 22"><path d="M0.8 0 V9.5" stroke="#262626" stroke-width="1"/><path d="M8.3 3 V9.5" stroke="#262626" stroke-width="1"/><path d="M17.4 3 V9.5" stroke="#262626" stroke-width="1"/><path d="M24.9 0 V9.5" stroke="#262626" stroke-width="1"/><path d="M34.9 3 V9.5" stroke="#262626" stroke-width="1"/><path d="M41.75 3 V9.5" stroke="#262626" stroke-width="1"/><path d="M48 3 V9.5" stroke="#262626" stroke-width="1"/><path d="M54.6 3 V9.5" stroke="#262626" stroke-width="1"/><path d="M58.6 3 V9.5" stroke="#262626" stroke-width="1"/><path d="M64.9 3 V9.5" stroke="#262626" stroke-width="1"/><path d="M69.9 3 V9.5" stroke="#262626" stroke-width="1"/><path d="M76.4 0 V9.5" stroke="#262626" stroke-width="1"/><path d="M107.75 3 V9.5" stroke="#262626" stroke-width="1"/><path d="M132 3 V9.5" stroke="#262626" stroke-width="1"/><path d="M152.75 3 V9.5" stroke="#262626" stroke-width="1"/><rect x="0" y="8.1" width="154" height="1.9" fill="#151515"/><rect x="0" y="10" width="154" height="1.5" fill="#4a4a4a"/><rect x="0" y="11.5" width="154" height="1.9" fill="#151515"/><text x="0.8" y="21.5" font-size="6.5" fill="#262626" font-family="Liberation Sans">0</text><text x="77" y="21.5" font-size="6.5" fill="#262626" font-family="Liberation Sans">1</text><text x="108" y="21.5" font-size="6.5" fill="#262626" font-family="Liberation Sans">2</text><text x="150" y="21.5" font-size="6.5" fill="#262626" font-family="Liberation Sans">4</text><rect x="73.9" y="4" width="5" height="10" fill="#8a7738" stroke="#2c2610" stroke-width="0.7"/></svg>
<div style="left:1145px;top:802.6px;width:92.00px;height:22.50px;background:#444;border:1px solid #292929;border-radius:3px;"></div>
<div style="left:1165.45px;top:802.6px;width:1.60px;height:22.50px;background:#2c2c2c;"></div>
<div style="left:1189.2px;top:802.6px;width:1.60px;height:22.50px;background:#2c2c2c;"></div>
<div style="left:1212.95px;top:802.6px;width:1.60px;height:22.50px;background:#2c2c2c;"></div>
<div style="left:1147.5px;top:806.8000000000001px;width:15.50px;height:14.80px;background:#fff;border:1.5px solid #1a1a1a;border-radius:1px;"></div>
<div style="left:1171.0px;top:805.9px;width:15px;height:15px;border-radius:50%;background:radial-gradient(circle at 50% 50%,rgba(255,255,255,.85) 0,rgba(255,255,255,.25) 55%,rgba(255,255,255,0) 80%),conic-gradient(from 0deg,#d050ff,#ff50c0 50deg,#ff9060 100deg,#e8f040 150deg,#60f060 200deg,#40e8c0 250deg,#50a0ff 300deg,#d050ff);"></div>
<div class="t" style="left:1001.5px;width:400px;text-align:center;top:806.7px;font-size:15px;color:#d8d8d8;">4</div>
<svg style="left:1217px;top:805.6px" width="18" height="17" viewBox="0 0 18 17"><path d="M1.2 16.5 C3 10.5 5 6.8 7 7.5 C9 8.5 9.5 14.8 11.5 14.5 C13.5 14 15.5 8 17 3.3" fill="none" stroke="#151515" stroke-width="1.9" stroke-linecap="round"/></svg>
<div class="t" style="left:484px;width:400px;text-align:right;top:833.3px;font-size:15px;color:#d8d8d8;letter-spacing:0px;">offset</div>
<div class="fld" style="left:892.5px;top:829.6px;width:89.50px;height:22.50px;"></div>
<div class="t" style="left:897px;top:833.7px;font-size:15px;color:#e8e8e8;">0</div>
<svg style="left:986px;top:829.6px" width="154" height="22" viewBox="0 0 154 22"><path d="M0.8 3 V9.5" stroke="#262626" stroke-width="1"/><path d="M5.8 3 V9.5" stroke="#262626" stroke-width="1"/><path d="M10.8 3 V9.5" stroke="#262626" stroke-width="1"/><path d="M15.8 3 V9.5" stroke="#262626" stroke-width="1"/><path d="M20.8 3 V9.5" stroke="#262626" stroke-width="1"/><path d="M25.8 3 V9.5" stroke="#262626" stroke-width="1"/><path d="M30.8 3 V9.5" stroke="#262626" stroke-width="1"/><path d="M35.8 3 V9.5" stroke="#262626" stroke-width="1"/><path d="M40.8 3 V9.5" stroke="#262626" stroke-width="1"/><path d="M45.8 3 V9.5" stroke="#262626" stroke-width="1"/><path d="M50.8 3 V9.5" stroke="#262626" stroke-width="1"/><path d="M55.8 3 V9.5" stroke="#262626" stroke-width="1"/><path d="M60.8 3 V9.5" stroke="#262626" stroke-width="1"/><path d="M65.8 3 V9.5" stroke="#262626" stroke-width="1"/><path d="M70.8 3 V9.5" stroke="#262626" stroke-width="1"/><path d="M76.4 0 V9.5" stroke="#262626" stroke-width="1"/><path d="M85.9 3 V9.5" stroke="#262626" stroke-width="1"/><path d="M95.4 3 V9.5" stroke="#262626" stroke-width="1"/><path d="M104.9 3 V9.5" stroke="#262626" stroke-width="1"/><path d="M114.4 3 V9.5" stroke="#262626" stroke-width="1"/><path d="M123.9 3 V9.5" stroke="#262626" stroke-width="1"/><path d="M133.4 3 V9.5" stroke="#262626" stroke-width="1"/><path d="M142.9 3 V9.5" stroke="#262626" stroke-width="1"/><path d="M152.75 3 V9.5" stroke="#262626" stroke-width="1"/><rect x="0" y="8.1" width="154" height="1.9" fill="#151515"/><rect x="0" y="10" width="154" height="1.5" fill="#4a4a4a"/><rect x="0" y="11.5" width="154" height="1.9" fill="#151515"/><text x="0" y="21.5" font-size="6.5" fill="#262626" font-family="Liberation Sans">-1</text><text x="77" y="21.5" font-size="6.5" fill="#262626" font-family="Liberation Sans">0</text><text x="150" y="21.5" font-size="6.5" fill="#262626" font-family="Liberation Sans">1</text><rect x="73.9" y="4" width="5" height="10" fill="#8a7738" stroke="#2c2610" stroke-width="0.7"/></svg>
<div style="left:1145px;top:829.6px;width:92.00px;height:22.50px;background:#444;border:1px solid #292929;border-radius:3px;"></div>
<div style="left:1165.45px;top:829.6px;width:1.60px;height:22.50px;background:#2c2c2c;"></div>
<div style="left:1189.2px;top:829.6px;width:1.60px;height:22.50px;background:#2c2c2c;"></div>
<div style="left:1212.95px;top:829.6px;width:1.60px;height:22.50px;background:#2c2c2c;"></div>
<div style="left:1147.5px;top:833.8000000000001px;width:15.50px;height:14.80px;background:#000;border:1.5px solid #1a1a1a;border-radius:1px;"></div>
<div style="left:1171.0px;top:832.9px;width:15px;height:15px;border-radius:50%;background:radial-gradient(circle at 50% 50%,rgba(255,255,255,.85) 0,rgba(255,255,255,.25) 55%,rgba(255,255,255,0) 80%),conic-gradient(from 0deg,#d050ff,#ff50c0 50deg,#ff9060 100deg,#e8f040 150deg,#60f060 200deg,#40e8c0 250deg,#50a0ff 300deg,#d050ff);"></div>
<div class="t" style="left:1001.5px;width:400px;text-align:center;top:833.7px;font-size:15px;color:#d8d8d8;">4</div>
<svg style="left:1217px;top:832.6px" width="18" height="17" viewBox="0 0 18 17"><path d="M1.2 16.5 C3 10.5 5 6.8 7 7.5 C9 8.5 9.5 14.8 11.5 14.5 C13.5 14 15.5 8 17 3.3" fill="none" stroke="#151515" stroke-width="1.9" stroke-linecap="round"/></svg>
<svg style="left:819.5px;top:860.4px" width="11.5" height="10" viewBox="0 0 11.5 10"><path d="M0 0 H11.5 L5.75 10 Z" fill="#000"/></svg>
<div class="t" style="left:840px;top:861.6px;font-size:15px;color:#d8d8d8;">highlights</div>
<div class="t" style="left:484px;width:400px;text-align:right;top:887.3px;font-size:15px;color:#d8d8d8;letter-spacing:0.35px;">saturation</div>
<div class="fld" style="left:892.5px;top:883.6px;width:89.50px;height:22.50px;"></div>
<div class="t" style="left:897px;top:887.7px;font-size:15px;color:#e8e8e8;">1</div>
<svg style="left:986px;top:883.6px" width="154" height="22" viewBox="0 0 154 22"><path d="M0.8 0 V9.5" stroke="#262626" stroke-width="1"/><path d="M8.3 3 V9.5" stroke="#262626" stroke-width="1"/><path d="M17.4 3 V9.5" stroke="#262626" stroke-width="1"/><path d="M24.9 0 V9.5" stroke="#262626" stroke-width="1"/><path d="M34.9 3 V9.5" stroke="#262626" stroke-width="1"/><path d="M41.75 3 V9.5" stroke="#262626" stroke-width="1"/><path d="M48 3 V9.5" stroke="#262626" stroke-width="1"/><path d="M54.6 3 V9.5" stroke="#262626" stroke-width="1"/><path d="M58.6 3 V9.5" stroke="#262626" stroke-width="1"/><path d="M64.9 3 V9.5" stroke="#262626" stroke-width="1"/><path d="M69.9 3 V9.5" stroke="#262626" stroke-width="1"/><path d="M76.4 0 V9.5" stroke="#262626" stroke-width="1"/><path d="M107.75 3 V9.5" stroke="#262626" stroke-width="1"/><path d="M132 3 V9.5" stroke="#262626" stroke-width="1"/><path d="M152.75 3 V9.5" stroke="#262626" stroke-width="1"/><rect x="0" y="8.1" width="154" height="1.9" fill="#151515"/><rect x="0" y="10" width="154" height="1.5" fill="#4a4a4a"/><rect x="0" y="11.5" width="154" height="1.9" fill="#151515"/><text x="0.8" y="21.5" font-size="6.5" fill="#262626" font-family="Liberation Sans">0</text><text x="77" y="21.5" font-size="6.5" fill="#262626" font-family="Liberation Sans">1</text><text x="108" y="21.5" font-size="6.5" fill="#262626" font-family="Liberation Sans">2</text><text x="150" y="21.5" font-size="6.5" fill="#262626" font-family="Liberation Sans">4</text><rect x="73.9" y="4" width="5" height="10" fill="#8a7738" stroke="#2c2610" stroke-width="0.7"/></svg>
<div style="left:1145px;top:883.6px;width:92.00px;height:22.50px;background:#444;border:1px solid #292929;border-radius:3px;"></div>
<div style="left:1165.45px;top:883.6px;width:1.60px;height:22.50px;background:#2c2c2c;"></div>
<div style="left:1189.2px;top:883.6px;width:1.60px;height:22.50px;background:#2c2c2c;"></div>
<div style="left:1212.95px;top:883.6px;width:1.60px;height:22.50px;background:#2c2c2c;"></div>
<div style="left:1147.5px;top:887.8000000000001px;width:15.50px;height:14.80px;background:#fff;border:1.5px solid #1a1a1a;border-radius:1px;"></div>
<div style="left:1171.0px;top:886.9px;width:15px;height:15px;border-radius:50%;background:radial-gradient(circle at 50% 50%,rgba(255,255,255,.85) 0,rgba(255,255,255,.25) 55%,rgba(255,255,255,0) 80%),conic-gradient(from 0deg,#d050ff,#ff50c0 50deg,#ff9060 100deg,#e8f040 150deg,#60f060 200deg,#40e8c0 250deg,#50a0ff 300deg,#d050ff);"></div>
<div class="t" style="left:1001.5px;width:400px;text-align:center;top:887.7px;font-size:15px;color:#d8d8d8;">4</div>
<svg style="left:1217px;top:886.6px" width="18" height="17" viewBox="0 0 18 17"><path d="M1.2 16.5 C3 10.5 5 6.8 7 7.5 C9 8.5 9.5 14.8 11.5 14.5 C13.5 14 15.5 8 17 3.3" fill="none" stroke="#151515" stroke-width="1.9" stroke-linecap="round"/></svg>
<div class="t" style="left:484px;width:400px;text-align:right;top:914.3px;font-size:15px;color:#d8d8d8;letter-spacing:0.2px;">contrast</div>
<div class="fld" style="left:892.5px;top:910.6px;width:89.50px;height:22.50px;"></div>
<div class="t" style="left:897px;top:914.7px;font-size:15px;color:#e8e8e8;">1</div>
<svg style="left:986px;top:910.6px" width="154" height="22" viewBox="0 0 154 22"><path d="M0.8 0 V9.5" stroke="#262626" stroke-width="1"/><path d="M8.3 3 V9.5" stroke="#262626" stroke-width="1"/><path d="M17.4 3 V9.5" stroke="#262626" stroke-width="1"/><path d="M24.9 0 V9.5" stroke="#262626" stroke-width="1"/><path d="M34.9 3 V9.5" stroke="#262626" stroke-width="1"/><path d="M41.75 3 V9.5" stroke="#262626" stroke-width="1"/><path d="M48 3 V9.5" stroke="#262626" stroke-width="1"/><path d="M54.6 3 V9.5" stroke="#262626" stroke-width="1"/><path d="M58.6 3 V9.5" stroke="#262626" stroke-width="1"/><path d="M64.9 3 V9.5" stroke="#262626" stroke-width="1"/><path d="M69.9 3 V9.5" stroke="#262626" stroke-width="1"/><path d="M76.4 0 V9.5" stroke="#262626" stroke-width="1"/><path d="M107.75 3 V9.5" stroke="#262626" stroke-width="1"/><path d="M132 3 V9.5" stroke="#262626" stroke-width="1"/><path d="M152.75 3 V9.5" stroke="#262626" stroke-width="1"/><rect x="0" y="8.1" width="154" height="1.9" fill="#151515"/><rect x="0" y="10" width="154" height="1.5" fill="#4a4a4a"/><rect x="0" y="11.5" width="154" height="1.9" fill="#151515"/><text x="0.8" y="21.5" font-size="6.5" fill="#262626" font-family="Liberation Sans">0</text><text x="77" y="21.5" font-size="6.5" fill="#262626" font-family="Liberation Sans">1</text><text x="108" y="21.5" font-size="6.5" fill="#262626" font-family="Liberation Sans">2</text><text x="150" y="21.5" font-size="6.5" fill="#262626" font-family="Liberation Sans">4</text><rect x="73.9" y="4" width="5" height="10" fill="#8a7738" stroke="#2c2610" stroke-width="0.7"/></svg>
<div style="left:1145px;top:910.6px;width:92.00px;height:22.50px;background:#444;border:1px solid #292929;border-radius:3px;"></div>
<div style="left:1165.45px;top:910.6px;width:1.60px;height:22.50px;background:#2c2c2c;"></div>
<div style="left:1189.2px;top:910.6px;width:1.60px;height:22.50px;background:#2c2c2c;"></div>
<div style="left:1212.95px;top:910.6px;width:1.60px;height:22.50px;background:#2c2c2c;"></div>
<div style="left:1147.5px;top:914.8000000000001px;width:15.50px;height:14.80px;background:#fff;border:1.5px solid #1a1a1a;border-radius:1px;"></div>
<div style="left:1171.0px;top:913.9px;width:15px;height:15px;border-radius:50%;background:radial-gradient(circle at 50% 50%,rgba(255,255,255,.85) 0,rgba(255,255,255,.25) 55%,rgba(255,255,255,0) 80%),conic-gradient(from 0deg,#d050ff,#ff50c0 50deg,#ff9060 100deg,#e8f040 150deg,#60f060 200deg,#40e8c0 250deg,#50a0ff 300deg,#d050ff);"></div>
<div class="t" style="left:1001.5px;width:400px;text-align:center;top:914.7px;font-size:15px;color:#d8d8d8;">4</div>
<svg style="left:1217px;top:913.6px" width="18" height="17" viewBox="0 0 18 17"><path d="M1.2 16.5 C3 10.5 5 6.8 7 7.5 C9 8.5 9.5 14.8 11.5 14.5 C13.5 14 15.5 8 17 3.3" fill="none" stroke="#151515" stroke-width="1.9" stroke-linecap="round"/></svg>
<div class="t" style="left:484px;width:400px;text-align:right;top:941.3px;font-size:15px;color:#d8d8d8;letter-spacing:0px;">gamma</div>
<div class="fld" style="left:892.5px;top:937.6px;width:89.50px;height:22.50px;"></div>
<div class="t" style="left:897px;top:941.7px;font-size:15px;color:#e8e8e8;">1</div>
<svg style="left:986px;top:937.6px" width="154" height="22" viewBox="0 0 154 22"><path d="M0.8 0 V9.5" stroke="#262626" stroke-width="1"/><path d="M19 3 V9.5" stroke="#262626" stroke-width="1"/><path d="M33 3 V9.5" stroke="#262626" stroke-width="1"/><path d="M43 3 V9.5" stroke="#262626" stroke-width="1"/><path d="M50 3 V9.5" stroke="#262626" stroke-width="1"/><path d="M63 3 V9.5" stroke="#262626" stroke-width="1"/><path d="M76.4 0 V9.5" stroke="#262626" stroke-width="1"/><path d="M107 3 V9.5" stroke="#262626" stroke-width="1"/><path d="M127 3 V9.5" stroke="#262626" stroke-width="1"/><path d="M140 3 V9.5" stroke="#262626" stroke-width="1"/><path d="M152.75 3 V9.5" stroke="#262626" stroke-width="1"/><rect x="0" y="8.1" width="154" height="1.9" fill="#151515"/><rect x="0" y="10" width="154" height="1.5" fill="#4a4a4a"/><rect x="0" y="11.5" width="154" height="1.9" fill="#151515"/><text x="0.5" y="21.5" font-size="6.5" fill="#262626" font-family="Liberation Sans">0.2</text><text x="9" y="21.5" font-size="6.5" fill="#262626" font-family="Liberation Sans">0.3</text><text x="77" y="21.5" font-size="6.5" fill="#262626" font-family="Liberation Sans">1</text><text x="127" y="21.5" font-size="6.5" fill="#262626" font-family="Liberation Sans">3</text><text x="150" y="21.5" font-size="6.5" fill="#262626" font-family="Liberation Sans">5</text><rect x="73.9" y="4" width="5" height="10" fill="#8a7738" stroke="#2c2610" stroke-width="0.7"/></svg>
<div style="left:1145px;top:937.6px;width:92.00px;height:22.50px;background:#444;border:1px solid #292929;border-radius:3px;"></div>
<div style="left:1165.45px;top:937.6px;width:1.60px;height:22.50px;background:#2c2c2c;"></div>
<div style="left:1189.2px;top:937.6px;width:1.60px;height:22.50px;background:#2c2c2c;"></div>
<div style="left:1212.95px;top:937.6px;width:1.60px;height:22.50px;background:#2c2c2c;"></div>
<div style="left:1147.5px;top:941.8000000000001px;width:15.50px;height:14.80px;background:#fff;border:1.5px solid #1a1a1a;border-radius:1px;"></div>
<div style="left:1171.0px;top:940.9px;width:15px;height:15px;border-radius:50%;background:radial-gradient(circle at 50% 50%,rgba(255,255,255,.85) 0,rgba(255,255,255,.25) 55%,rgba(255,255,255,0) 80%),conic-gradient(from 0deg,#d050ff,#ff50c0 50deg,#ff9060 100deg,#e8f040 150deg,#60f060 200deg,#40e8c0 250deg,#50a0ff 300deg,#d050ff);"></div>
<div class="t" style="left:1001.5px;width:400px;text-align:center;top:941.7px;font-size:15px;color:#d8d8d8;">4</div>
<svg style="left:1217px;top:940.6px" width="18" height="17" viewBox="0 0 18 17"><path d="M1.2 16.5 C3 10.5 5 6.8 7 7.5 C9 8.5 9.5 14.8 11.5 14.5 C13.5 14 15.5 8 17 3.3" fill="none" stroke="#151515" stroke-width="1.9" stroke-linecap="round"/></svg>
<div class="t" style="left:484px;width:400px;text-align:right;top:968.3px;font-size:15px;color:#d8d8d8;letter-spacing:0px;">gain</div>
<div class="fld" style="left:892.5px;top:964.6px;width:89.50px;height:22.50px;"></div>
<div class="t" style="left:897px;top:968.7px;font-size:15px;color:#e8e8e8;">1</div>
<svg style="left:986px;top:964.6px" width="154" height="22" viewBox="0 0 154 22"><path d="M0.8 0 V9.5" stroke="#262626" stroke-width="1"/><path d="M8.3 3 V9.5" stroke="#262626" stroke-width="1"/><path d="M17.4 3 V9.5" stroke="#262626" stroke-width="1"/><path d="M24.9 0 V9.5" stroke="#262626" stroke-width="1"/><path d="M34.9 3 V9.5" stroke="#262626" stroke-width="1"/><path d="M41.75 3 V9.5" stroke="#262626" stroke-width="1"/><path d="M48 3 V9.5" stroke="#262626" stroke-width="1"/><path d="M54.6 3 V9.5" stroke="#262626" stroke-width="1"/><path d="M58.6 3 V9.5" stroke="#262626" stroke-width="1"/><path d="M64.9 3 V9.5" stroke="#262626" stroke-width="1"/><path d="M69.9 3 V9.5" stroke="#262626" stroke-width="1"/><path d="M76.4 0 V9.5" stroke="#262626" stroke-width="1"/><path d="M107.75 3 V9.5" stroke="#262626" stroke-width="1"/><path d="M132 3 V9.5" stroke="#262626" stroke-width="1"/><path d="M152.75 3 V9.5" stroke="#262626" stroke-width="1"/><rect x="0" y="8.1" width="154" height="1.9" fill="#151515"/><rect x="0" y="10" width="154" height="1.5" fill="#4a4a4a"/><rect x="0" y="11.5" width="154" height="1.9" fill="#151515"/><text x="0.8" y="21.5" font-size="6.5" fill="#262626" font-family="Liberation Sans">0</text><text x="77" y="21.5" font-size="6.5" fill="#262626" font-family="Liberation Sans">1</text><text x="108" y="21.5" font-size="6.5" fill="#262626" font-family="Liberation Sans">2</text><text x="150" y="21.5" font-size="6.5" fill="#262626" font-family="Liberation Sans">4</text><rect x="73.9" y="4" width="5" height="10" fill="#8a7738" stroke="#2c2610" stroke-width="0.7"/></svg>
<div style="left:1145px;top:964.6px;width:92.00px;height:22.50px;background:#444;border:1px solid #292929;border-radius:3px;"></div>
<div style="left:1165.45px;top:964.6px;width:1.60px;height:22.50px;background:#2c2c2c;"></div>
<div style="left:1189.2px;top:964.6px;width:1.60px;height:22.50px;background:#2c2c2c;"></div>
<div style="left:1212.95px;top:964.6px;width:1.60px;height:22.50px;background:#2c2c2c;"></div>
<div style="left:1147.5px;top:968.8000000000001px;width:15.50px;height:14.80px;background:#fff;border:1.5px solid #1a1a1a;border-radius:1px;"></div>
<div style="left:1171.0px;top:967.9px;width:15px;height:15px;border-radius:50%;background:radial-gradient(circle at 50% 50%,rgba(255,255,255,.85) 0,rgba(255,255,255,.25) 55%,rgba(255,255,255,0) 80%),conic-gradient(from 0deg,#d050ff,#ff50c0 50deg,#ff9060 100deg,#e8f040 150deg,#60f060 200deg,#40e8c0 250deg,#50a0ff 300deg,#d050ff);"></div>
<div class="t" style="left:1001.5px;width:400px;text-align:center;top:968.7px;font-size:15px;color:#d8d8d8;">4</div>
<svg style="left:1217px;top:967.6px" width="18" height="17" viewBox="0 0 18 17"><path d="M1.2 16.5 C3 10.5 5 6.8 7 7.5 C9 8.5 9.5 14.8 11.5 14.5 C13.5 14 15.5 8 17 3.3" fill="none" stroke="#151515" stroke-width="1.9" stroke-linecap="round"/></svg>
<div class="t" style="left:484px;width:400px;text-align:right;top:995.3px;font-size:15px;color:#d8d8d8;letter-spacing:0px;">offset</div>
<div class="fld" style="left:892.5px;top:991.6px;width:89.50px;height:22.50px;"></div>
<div class="t" style="left:897px;top:995.7px;font-size:15px;color:#e8e8e8;">0</div>
<svg style="left:986px;top:991.6px" width="154" height="22" viewBox="0 0 154 22"><path d="M0.8 3 V9.5" stroke="#262626" stroke-width="1"/><path d="M5.8 3 V9.5" stroke="#262626" stroke-width="1"/><path d="M10.8 3 V9.5" stroke="#262626" stroke-width="1"/><path d="M15.8 3 V9.5" stroke="#262626" stroke-width="1"/><path d="M20.8 3 V9.5" stroke="#262626" stroke-width="1"/><path d="M25.8 3 V9.5" stroke="#262626" stroke-width="1"/><path d="M30.8 3 V9.5" stroke="#262626" stroke-width="1"/><path d="M35.8 3 V9.5" stroke="#262626" stroke-width="1"/><path d="M40.8 3 V9.5" stroke="#262626" stroke-width="1"/><path d="M45.8 3 V9.5" stroke="#262626" stroke-width="1"/><path d="M50.8 3 V9.5" stroke="#262626" stroke-width="1"/><path d="M55.8 3 V9.5" stroke="#262626" stroke-width="1"/><path d="M60.8 3 V9.5" stroke="#262626" stroke-width="1"/><path d="M65.8 3 V9.5" stroke="#262626" stroke-width="1"/><path d="M70.8 3 V9.5" stroke="#262626" stroke-width="1"/><path d="M76.4 0 V9.5" stroke="#262626" stroke-width="1"/><path d="M85.9 3 V9.5" stroke="#262626" stroke-width="1"/><path d="M95.4 3 V9.5" stroke="#262626" stroke-width="1"/><path d="M104.9 3 V9.5" stroke="#262626" stroke-width="1"/><path d="M114.4 3 V9.5" stroke="#262626" stroke-width="1"/><path d="M123.9 3 V9.5" stroke="#262626" stroke-width="1"/><path d="M133.4 3 V9.5" stroke="#262626" stroke-width="1"/><path d="M142.9 3 V9.5" stroke="#262626" stroke-width="1"/><path d="M152.75 3 V9.5" stroke="#262626" stroke-width="1"/><rect x="0" y="8.1" width="154" height="1.9" fill="#151515"/><rect x="0" y="10" width="154" height="1.5" fill="#4a4a4a"/><rect x="0" y="11.5" width="154" height="1.9" fill="#151515"/><text x="0" y="21.5" font-size="6.5" fill="#262626" font-family="Liberation Sans">-1</text><text x="77" y="21.5" font-size="6.5" fill="#262626" font-family="Liberation Sans">0</text><text x="150" y="21.5" font-size="6.5" fill="#262626" font-family="Liberation Sans">1</text><rect x="73.9" y="4" width="5" height="10" fill="#8a7738" stroke="#2c2610" stroke-width="0.7"/></svg>
<div style="left:1145px;top:991.6px;width:92.00px;height:22.50px;background:#444;border:1px solid #292929;border-radius:3px;"></div>
<div style="left:1165.45px;top:991.6px;width:1.60px;height:22.50px;background:#2c2c2c;"></div>
<div style="left:1189.2px;top:991.6px;width:1.60px;height:22.50px;background:#2c2c2c;"></div>
<div style="left:1212.95px;top:991.6px;width:1.60px;height:22.50px;background:#2c2c2c;"></div>
<div style="left:1147.5px;top:995.8000000000001px;width:15.50px;height:14.80px;background:#000;border:1.5px solid #1a1a1a;border-radius:1px;"></div>
<div style="left:1171.0px;top:994.9px;width:15px;height:15px;border-radius:50%;background:radial-gradient(circle at 50% 50%,rgba(255,255,255,.85) 0,rgba(255,255,255,.25) 55%,rgba(255,255,255,0) 80%),conic-gradient(from 0deg,#d050ff,#ff50c0 50deg,#ff9060 100deg,#e8f040 150deg,#60f060 200deg,#40e8c0 250deg,#50a0ff 300deg,#d050ff);"></div>
<div class="t" style="left:1001.5px;width:400px;text-align:center;top:995.7px;font-size:15px;color:#d8d8d8;">4</div>
<svg style="left:1217px;top:994.6px" width="18" height="17" viewBox="0 0 18 17"><path d="M1.2 16.5 C3 10.5 5 6.8 7 7.5 C9 8.5 9.5 14.8 11.5 14.5 C13.5 14 15.5 8 17 3.3" fill="none" stroke="#151515" stroke-width="1.9" stroke-linecap="round"/></svg>
</div></body></html>
